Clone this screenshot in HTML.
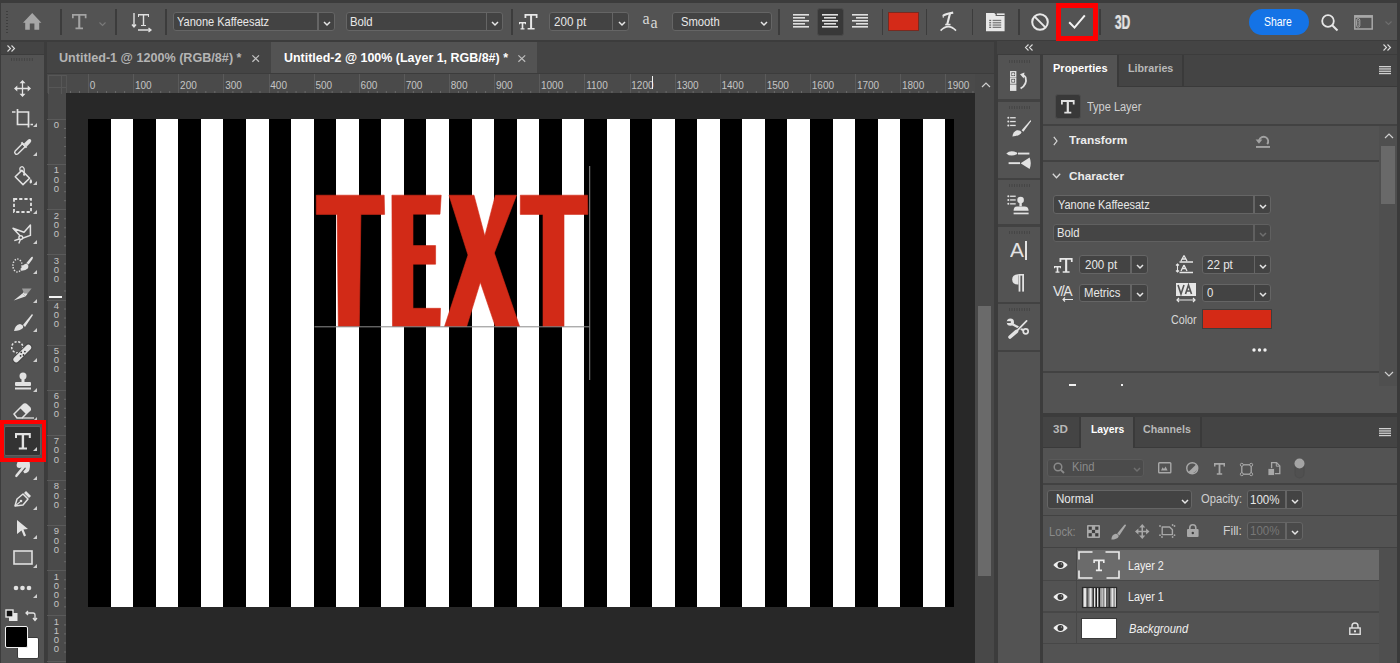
<!DOCTYPE html><html><head><meta charset="utf-8"><style>
html,body{margin:0;padding:0;}
body{width:1400px;height:663px;overflow:hidden;position:relative;background:#3c3c3c;font-family:"Liberation Sans",sans-serif;}
div{position:absolute;box-sizing:border-box;}
.t{white-space:nowrap;line-height:1;}
svg{overflow:visible}
</style></head><body>
<div style="left:1px;top:3px;width:1399px;height:37px;background:#535353;"></div>
<svg style="position:absolute;left:6px;top:11px;" width="3" height="23" viewBox="0 0 3 23"><rect x="0" y="0" width="2" height="1" fill="#3e3e3e"/><rect x="0" y="3" width="2" height="1" fill="#3e3e3e"/><rect x="0" y="6" width="2" height="1" fill="#3e3e3e"/><rect x="0" y="9" width="2" height="1" fill="#3e3e3e"/><rect x="0" y="12" width="2" height="1" fill="#3e3e3e"/><rect x="0" y="15" width="2" height="1" fill="#3e3e3e"/><rect x="0" y="18" width="2" height="1" fill="#3e3e3e"/><rect x="0" y="21" width="2" height="1" fill="#3e3e3e"/></svg>
<svg style="position:absolute;left:22.5px;top:13px;" width="19" height="17" viewBox="0 0 19 17"><path d="M9.2 0 L18.4 9.8 L16.2 9.8 L16.2 16.8 L11.4 16.8 L11.4 10.5 L6.8 10.5 L6.8 16.8 L2.2 16.8 L2.2 9.8 L0 9.8 Z" fill="#a6a6a6"/></svg>
<div style="left:60px;top:9px;width:1.6px;height:26px;background:#3c3c3c;"></div>
<div style="left:115px;top:9px;width:1.6px;height:26px;background:#3c3c3c;"></div>
<div style="left:165px;top:9px;width:1.6px;height:26px;background:#3c3c3c;"></div>
<div style="left:511px;top:9px;width:1.6px;height:26px;background:#3c3c3c;"></div>
<div style="left:778px;top:9px;width:1.6px;height:26px;background:#3c3c3c;"></div>
<div style="left:881.5px;top:9px;width:1.6px;height:26px;background:#3c3c3c;"></div>
<div style="left:925.5px;top:9px;width:1.6px;height:26px;background:#3c3c3c;"></div>
<div style="left:971.5px;top:9px;width:1.6px;height:26px;background:#3c3c3c;"></div>
<div style="left:1018px;top:9px;width:1.6px;height:26px;background:#3c3c3c;"></div>
<div style="left:1099px;top:9px;width:1.6px;height:26px;background:#3c3c3c;"></div>
<svg style="position:absolute;left:72px;top:14px;" width="15" height="15.5" viewBox="0 0 15 15.5"><path d="M0 0 H14.5 V4.2 H12.8 V1.8 H8.3 V13.6 H11 V15.3 H3.5 V13.6 H6.2 V1.8 H1.7 V4.2 H0 Z" fill="#a3a3a3"/></svg>
<svg style="position:absolute;left:99px;top:21.5px;" width="8" height="5" viewBox="0 0 8 5"><path d="M0.5 0.5 L3.5 3.5 L6.5 0.5" stroke="#7a7a7a" stroke-width="1.1" fill="none"/></svg>
<svg style="position:absolute;left:132px;top:13px;" width="20" height="19" viewBox="0 0 20 19"><path d="M2 0 V14 M0 11.5 L2 14 L4 11.5" stroke="#e0e0e0" stroke-width="1.4" fill="none"/><path d="M6 1 H17 V4 H16 V2.5 H12.2 V12 H14 V13 H9 V12 H10.8 V2.5 H7 V4 H6 Z" fill="#e0e0e0"/><path d="M6 17 H19 M16.5 15 L19 17 L16.5 19" stroke="#e0e0e0" stroke-width="1.3" fill="none"/></svg>
<div style="left:172.5px;top:12.3px;width:162px;height:18.5px;background:#434343;border:1px solid #656565;border-radius:3px;"></div>
<div class="t" style="left:177.3px;top:15.2px;font-size:13px;color:#e8e8e8;font-weight:400;letter-spacing:0px;transform:scaleX(0.8478);transform-origin:0 0;">Yanone Kaffeesatz</div>
<div style="left:317.0px;top:13.3px;width:1.6px;height:16.5px;background:#656565;"></div>
<svg style="position:absolute;left:322.8px;top:20.55px;" width="8" height="5" viewBox="0 0 8 5"><path d="M1 1 L4 4 L7 1" stroke="#e6e6e6" stroke-width="1.5" fill="none"/></svg>
<div style="left:346px;top:12.3px;width:157px;height:18.5px;background:#434343;border:1px solid #656565;border-radius:3px;"></div>
<div class="t" style="left:349.93px;top:15.2px;font-size:13px;color:#e8e8e8;font-weight:400;letter-spacing:0px;transform:scaleX(0.8714);transform-origin:0 0;">Bold</div>
<div style="left:485.5px;top:13.3px;width:1.6px;height:16.5px;background:#656565;"></div>
<svg style="position:absolute;left:491.3px;top:20.55px;" width="8" height="5" viewBox="0 0 8 5"><path d="M1 1 L4 4 L7 1" stroke="#e6e6e6" stroke-width="1.5" fill="none"/></svg>
<svg style="position:absolute;left:518.5px;top:14px;" width="19" height="16" viewBox="0 0 19 16"><path d="M5.5 0 H18.5 V4 H16.8 V1.8 H13.1 V14 H15.6 V15.6 H8.6 V14 H11.1 V1.8 H7.3 V4 H5.5 Z" fill="#e8e8e8"/><path d="M0 8 H7 V10.3 H6 V9.5 H4.3 V14.2 H5.5 V15.6 H1.5 V14.2 H2.7 V9.5 H1 V10.3 H0 Z" fill="#e8e8e8"/></svg>
<div style="left:549.3px;top:12.3px;width:80px;height:18.5px;background:#434343;border:1px solid #656565;border-radius:3px;"></div>
<div class="t" style="left:554.4px;top:15.2px;font-size:13px;color:#e8e8e8;font-weight:400;letter-spacing:0px;transform:scaleX(0.8924);transform-origin:0 0;">200 pt</div>
<div style="left:611.8px;top:13.3px;width:1.6px;height:16.5px;background:#656565;"></div>
<svg style="position:absolute;left:617.5999999999999px;top:20.55px;" width="8" height="5" viewBox="0 0 8 5"><path d="M1 1 L4 4 L7 1" stroke="#e6e6e6" stroke-width="1.5" fill="none"/></svg>
<div class="t" style="left:642.5px;top:10.54px;font-size:16px;color:#d8d8d8;font-weight:400;letter-spacing:0px;font-family:'Liberation Serif';">a</div>
<div class="t" style="left:650.6px;top:15.14px;font-size:16px;color:#d8d8d8;font-weight:400;letter-spacing:0px;font-family:'Liberation Serif';">a</div>
<div style="left:671.9px;top:12.3px;width:100px;height:18.5px;background:#434343;border:1px solid #656565;border-radius:3px;"></div>
<div class="t" style="left:681.3px;top:15.2px;font-size:13px;color:#e8e8e8;font-weight:400;letter-spacing:0px;transform:scaleX(0.8638);transform-origin:0 0;">Smooth</div>
<svg style="position:absolute;left:760.1999999999999px;top:20.55px;" width="8" height="5" viewBox="0 0 8 5"><path d="M1 1 L4 4 L7 1" stroke="#e6e6e6" stroke-width="1.5" fill="none"/></svg>
<svg style="position:absolute;left:793px;top:14px;" width="16" height="14" viewBox="0 0 16 14"><rect x="0" y="0" width="16" height="1.6" fill="#e0e0e0"/><rect x="0" y="3" width="12" height="1.6" fill="#e0e0e0"/><rect x="0" y="6" width="16" height="1.6" fill="#e0e0e0"/><rect x="0" y="9" width="12" height="1.6" fill="#e0e0e0"/><rect x="0" y="12" width="16" height="1.6" fill="#e0e0e0"/></svg>
<div style="left:817px;top:8px;width:27px;height:28px;background:#383838;border-radius:3px;border:1px solid #4a4a4a;"></div>
<svg style="position:absolute;left:822px;top:14px;" width="16" height="14" viewBox="0 0 16 14"><rect x="0.0" y="0" width="16" height="1.6" fill="#e0e0e0"/><rect x="2.0" y="3" width="12" height="1.6" fill="#e0e0e0"/><rect x="0.0" y="6" width="16" height="1.6" fill="#e0e0e0"/><rect x="2.0" y="9" width="12" height="1.6" fill="#e0e0e0"/><rect x="0.0" y="12" width="16" height="1.6" fill="#e0e0e0"/></svg>
<svg style="position:absolute;left:852px;top:14px;" width="16" height="14" viewBox="0 0 16 14"><rect x="0" y="0" width="16" height="1.6" fill="#e0e0e0"/><rect x="4" y="3" width="12" height="1.6" fill="#e0e0e0"/><rect x="0" y="6" width="16" height="1.6" fill="#e0e0e0"/><rect x="4" y="9" width="12" height="1.6" fill="#e0e0e0"/><rect x="0" y="12" width="16" height="1.6" fill="#e0e0e0"/></svg>
<div style="left:888px;top:12px;width:31px;height:19px;background:#d42a18;border:1px solid #7a2a20;"></div>
<svg style="position:absolute;left:940px;top:12px;" width="17" height="20" viewBox="0 0 17 20"><path d="M3.2 3.6 Q6 1.8 13.2 0.6" stroke="#e6e6e6" stroke-width="2.2" fill="none"/><path d="M10 1.5 L7.2 12.4" stroke="#e6e6e6" stroke-width="2.1"/><path d="M5.2 12.6 H10.5" stroke="#e6e6e6" stroke-width="1.6"/><path d="M3 3 L3.4 5.6" stroke="#e6e6e6" stroke-width="1.2"/><path d="M0.6 18.6 Q8.3 10.6 16 18.6" stroke="#e6e6e6" stroke-width="1.6" fill="none"/></svg>
<svg style="position:absolute;left:985.7px;top:12.6px;" width="19" height="19" viewBox="0 0 19 19"><path d="M0 0 H8.3 L10.3 2.3 H18.6 V18.3 H0 Z" fill="#e8e8e8"/><path d="M10.3 2.3 L8.6 0.4 H18.6 V1.6" fill="none" stroke="none"/><rect x="10.8" y="0.4" width="7.8" height="1.6" fill="#e8e8e8"/><rect x="9.6" y="2.0" width="9" height="0.9" fill="#535353"/><rect x="3.2" y="6.8" width="2" height="1.3" fill="#6a6a6a"/><rect x="6.6" y="6.8" width="8.6" height="1.3" fill="#7a7a7a"/><rect x="3.2" y="9.1" width="2" height="1.3" fill="#6a6a6a"/><rect x="6.6" y="9.1" width="8.6" height="1.3" fill="#7a7a7a"/><rect x="3.2" y="11.4" width="2" height="1.3" fill="#6a6a6a"/><rect x="6.6" y="11.4" width="8.6" height="1.3" fill="#7a7a7a"/><rect x="3.2" y="13.7" width="2" height="1.3" fill="#6a6a6a"/><rect x="6.6" y="13.7" width="8.6" height="1.3" fill="#7a7a7a"/></svg>
<svg style="position:absolute;left:1031px;top:13px;" width="18" height="18" viewBox="0 0 18 18"><circle cx="9" cy="9" r="7.8" stroke="#e8e8e8" stroke-width="2" fill="none"/><path d="M3.6 3.6 L14.4 14.4" stroke="#e8e8e8" stroke-width="2"/></svg>
<div style="left:1056.4px;top:3.4px;width:41.8px;height:37.4px;background:transparent;border:5.7px solid #ff0000;"></div>
<svg style="position:absolute;left:1068px;top:14px;" width="18" height="15" viewBox="0 0 18 15"><path d="M1.2 8.2 L6.5 13.6 L16.8 1.3" stroke="#f4f4f4" stroke-width="2" fill="none"/></svg>
<div class="t" style="left:1115.2px;top:12.59px;font-size:19.5px;color:#e2e2e2;font-weight:700;letter-spacing:0px;transform:scaleX(0.6118);transform-origin:0 0;text-shadow:-1.3px 0.3px #8c8c8c;">3D</div>
<div style="left:1249px;top:9px;width:60px;height:26px;background:#1473e6;border-radius:13px;"></div>
<div class="t" style="left:1264.0px;top:15.94px;font-size:12px;color:#ffffff;font-weight:400;letter-spacing:0px;transform:scaleX(0.8687);transform-origin:0 0;">Share</div>
<svg style="position:absolute;left:1321px;top:14px;" width="18" height="17" viewBox="0 0 18 17"><circle cx="7" cy="7" r="5.8" stroke="#e6e6e6" stroke-width="1.8" fill="none"/><path d="M11.2 11.2 L16.5 16.5" stroke="#e6e6e6" stroke-width="2"/></svg>
<svg style="position:absolute;left:1354px;top:15px;" width="19" height="15" viewBox="0 0 19 15"><rect x="0.8" y="0.8" width="17.4" height="13.2" stroke="#a8a8a8" stroke-width="1.5" fill="none"/><rect x="0.8" y="0.8" width="17.4" height="2" fill="#a8a8a8"/><rect x="2.6" y="3.6" width="3.2" height="8.6" rx="1.6" stroke="#a8a8a8" stroke-width="1" fill="none"/><rect x="3.6" y="5.2" width="1.2" height="1.1" fill="#a8a8a8"/><rect x="3.6" y="7.4" width="1.2" height="1.1" fill="#a8a8a8"/><rect x="3.6" y="9.6" width="1.2" height="1.1" fill="#a8a8a8"/></svg>
<svg style="position:absolute;left:1385px;top:20.5px;" width="8" height="5" viewBox="0 0 8 5"><path d="M0.5 0.5 L3.5 3.5 L6.5 0.5" stroke="#6e6e6e" stroke-width="1.1" fill="none"/></svg>
<div style="left:1397px;top:0px;width:3px;height:663px;background:#3a3a3a;"></div>
<div style="left:1px;top:42px;width:43px;height:12px;background:#444444;"></div>
<svg style="position:absolute;left:7px;top:45px;" width="9" height="7" viewBox="0 0 9 7"><path d="M0.5 0.5 L3.5 3.5 L0.5 6.5 M4.5 0.5 L7.5 3.5 L4.5 6.5" stroke="#dcdcdc" stroke-width="1.1" fill="none"/></svg>
<div style="left:1px;top:55px;width:43px;height:608px;background:#535353;"></div>
<svg style="position:absolute;left:11px;top:58px;" width="22" height="2" viewBox="0 0 22 2"><rect x="0.0" y="0" width="1" height="3" fill="#444"/><rect x="2.6" y="0" width="1" height="3" fill="#444"/><rect x="5.2" y="0" width="1" height="3" fill="#444"/><rect x="7.800000000000001" y="0" width="1" height="3" fill="#444"/><rect x="10.4" y="0" width="1" height="3" fill="#444"/><rect x="13.0" y="0" width="1" height="3" fill="#444"/><rect x="15.600000000000001" y="0" width="1" height="3" fill="#444"/><rect x="18.2" y="0" width="1" height="3" fill="#444"/><rect x="20.8" y="0" width="1" height="3" fill="#444"/></svg>
<div style="left:47px;top:42px;width:928px;height:31px;background:#444444;"></div>
<div style="left:975px;top:42px;width:19px;height:31px;background:#444444;"></div>
<div class="t" style="left:59.0px;top:50.7px;font-size:13px;color:#b4b4b4;font-weight:700;letter-spacing:0px;transform:scaleX(0.9695);transform-origin:0 0;">Untitled-1 @ 1200% (RGB/8#) *</div>
<svg style="position:absolute;left:251.8px;top:54.6px;" width="7.4" height="7.2" viewBox="0 0 7.4 7.2"><path d="M0.4 0.4 L7 6.8 M7 0.4 L0.4 6.8" stroke="#c4c4c4" stroke-width="1.2"/></svg>
<div style="left:271px;top:42px;width:266px;height:31px;background:#535353;"></div>
<div class="t" style="left:283.6px;top:50.6px;font-size:13px;color:#ffffff;font-weight:700;letter-spacing:0px;transform:scaleX(0.9583);transform-origin:0 0;">Untitled-2 @ 100% (Layer 1, RGB/8#) *</div>
<svg style="position:absolute;left:517.8px;top:54.5px;" width="7.6" height="7.2" viewBox="0 0 7.6 7.2"><path d="M0.4 0.4 L7.2 6.8 M7.2 0.4 L0.4 6.8" stroke="#bdbdbd" stroke-width="1.2"/></svg>
<div style="left:47px;top:74px;width:928px;height:19px;background:#4a4a4a;"></div>
<div style="left:47px;top:93px;width:19px;height:570px;background:#4a4a4a;"></div>
<div style="left:47px;top:74px;width:1px;height:589px;background:#3d3d3d;"></div>
<div style="left:47px;top:74px;width:19px;height:19px;background:#4a4a4a;"></div>
<div style="left:48px;top:75px;width:18.5px;height:1px;background:#575757;"></div>
<div style="left:48px;top:87.3px;width:19px;height:1px;background:#575757;"></div>
<div style="left:48.2px;top:75px;width:1px;height:19px;background:#575757;"></div>
<div style="left:60.5px;top:75px;width:1px;height:19px;background:#575757;"></div>
<div style="left:66px;top:75px;width:1px;height:18px;background:#555555;"></div>
<div style="left:88.00px;top:74px;width:1px;height:19px;background:#5a5a5a"></div>
<div class="t" style="left:89.8px;top:80.5px;font-size:10px;color:#c4c4c4;font-weight:400;letter-spacing:0px;">0</div>
<div style="left:133.12px;top:74px;width:1px;height:19px;background:#5a5a5a"></div>
<div class="t" style="left:134.9px;top:80.5px;font-size:10px;color:#c4c4c4;font-weight:400;letter-spacing:0px;">100</div>
<div style="left:178.25px;top:74px;width:1px;height:19px;background:#5a5a5a"></div>
<div class="t" style="left:180.1px;top:80.5px;font-size:10px;color:#c4c4c4;font-weight:400;letter-spacing:0px;">200</div>
<div style="left:223.38px;top:74px;width:1px;height:19px;background:#5a5a5a"></div>
<div class="t" style="left:225.2px;top:80.5px;font-size:10px;color:#c4c4c4;font-weight:400;letter-spacing:0px;">300</div>
<div style="left:268.50px;top:74px;width:1px;height:19px;background:#5a5a5a"></div>
<div class="t" style="left:270.3px;top:80.5px;font-size:10px;color:#c4c4c4;font-weight:400;letter-spacing:0px;">400</div>
<div style="left:313.62px;top:74px;width:1px;height:19px;background:#5a5a5a"></div>
<div class="t" style="left:315.4px;top:80.5px;font-size:10px;color:#c4c4c4;font-weight:400;letter-spacing:0px;">500</div>
<div style="left:358.75px;top:74px;width:1px;height:19px;background:#5a5a5a"></div>
<div class="t" style="left:360.6px;top:80.5px;font-size:10px;color:#c4c4c4;font-weight:400;letter-spacing:0px;">600</div>
<div style="left:403.88px;top:74px;width:1px;height:19px;background:#5a5a5a"></div>
<div class="t" style="left:405.7px;top:80.5px;font-size:10px;color:#c4c4c4;font-weight:400;letter-spacing:0px;">700</div>
<div style="left:449.00px;top:74px;width:1px;height:19px;background:#5a5a5a"></div>
<div class="t" style="left:450.8px;top:80.5px;font-size:10px;color:#c4c4c4;font-weight:400;letter-spacing:0px;">800</div>
<div style="left:494.12px;top:74px;width:1px;height:19px;background:#5a5a5a"></div>
<div class="t" style="left:495.9px;top:80.5px;font-size:10px;color:#c4c4c4;font-weight:400;letter-spacing:0px;">900</div>
<div style="left:539.25px;top:74px;width:1px;height:19px;background:#5a5a5a"></div>
<div class="t" style="left:541.0px;top:80.5px;font-size:10px;color:#c4c4c4;font-weight:400;letter-spacing:0px;">1000</div>
<div style="left:584.38px;top:74px;width:1px;height:19px;background:#5a5a5a"></div>
<div class="t" style="left:586.2px;top:80.5px;font-size:10px;color:#c4c4c4;font-weight:400;letter-spacing:0px;">1100</div>
<div style="left:629.50px;top:74px;width:1px;height:19px;background:#5a5a5a"></div>
<div class="t" style="left:631.3px;top:80.5px;font-size:10px;color:#c4c4c4;font-weight:400;letter-spacing:0px;">1200</div>
<div style="left:674.62px;top:74px;width:1px;height:19px;background:#5a5a5a"></div>
<div class="t" style="left:676.4px;top:80.5px;font-size:10px;color:#c4c4c4;font-weight:400;letter-spacing:0px;">1300</div>
<div style="left:719.75px;top:74px;width:1px;height:19px;background:#5a5a5a"></div>
<div class="t" style="left:721.5px;top:80.5px;font-size:10px;color:#c4c4c4;font-weight:400;letter-spacing:0px;">1400</div>
<div style="left:764.88px;top:74px;width:1px;height:19px;background:#5a5a5a"></div>
<div class="t" style="left:766.7px;top:80.5px;font-size:10px;color:#c4c4c4;font-weight:400;letter-spacing:0px;">1500</div>
<div style="left:810.00px;top:74px;width:1px;height:19px;background:#5a5a5a"></div>
<div class="t" style="left:811.8px;top:80.5px;font-size:10px;color:#c4c4c4;font-weight:400;letter-spacing:0px;">1600</div>
<div style="left:855.12px;top:74px;width:1px;height:19px;background:#5a5a5a"></div>
<div class="t" style="left:856.9px;top:80.5px;font-size:10px;color:#c4c4c4;font-weight:400;letter-spacing:0px;">1700</div>
<div style="left:900.25px;top:74px;width:1px;height:19px;background:#5a5a5a"></div>
<div class="t" style="left:902.0px;top:80.5px;font-size:10px;color:#c4c4c4;font-weight:400;letter-spacing:0px;">1800</div>
<div style="left:945.38px;top:74px;width:1px;height:19px;background:#5a5a5a"></div>
<div class="t" style="left:947.2px;top:80.5px;font-size:10px;color:#c4c4c4;font-weight:400;letter-spacing:0px;">1900</div>
<svg style="position:absolute;left:66px;top:74px" width="909" height="19"><rect x="12.97" y="17" width="1" height="2" fill="#6a6a6a"/><rect x="3.95" y="17" width="1" height="2" fill="#6a6a6a"/><rect x="31.03" y="17" width="1" height="2" fill="#6a6a6a"/><rect x="40.05" y="17" width="1" height="2" fill="#6a6a6a"/><rect x="49.08" y="17" width="1" height="2" fill="#6a6a6a"/><rect x="58.10" y="17" width="1" height="2" fill="#6a6a6a"/><rect x="76.15" y="17" width="1" height="2" fill="#6a6a6a"/><rect x="85.18" y="17" width="1" height="2" fill="#6a6a6a"/><rect x="94.20" y="17" width="1" height="2" fill="#6a6a6a"/><rect x="103.22" y="17" width="1" height="2" fill="#6a6a6a"/><rect x="121.28" y="17" width="1" height="2" fill="#6a6a6a"/><rect x="130.30" y="17" width="1" height="2" fill="#6a6a6a"/><rect x="139.32" y="17" width="1" height="2" fill="#6a6a6a"/><rect x="148.35" y="17" width="1" height="2" fill="#6a6a6a"/><rect x="166.40" y="17" width="1" height="2" fill="#6a6a6a"/><rect x="175.43" y="17" width="1" height="2" fill="#6a6a6a"/><rect x="184.45" y="17" width="1" height="2" fill="#6a6a6a"/><rect x="193.48" y="17" width="1" height="2" fill="#6a6a6a"/><rect x="211.52" y="17" width="1" height="2" fill="#6a6a6a"/><rect x="220.55" y="17" width="1" height="2" fill="#6a6a6a"/><rect x="229.57" y="17" width="1" height="2" fill="#6a6a6a"/><rect x="238.60" y="17" width="1" height="2" fill="#6a6a6a"/><rect x="256.65" y="17" width="1" height="2" fill="#6a6a6a"/><rect x="265.68" y="17" width="1" height="2" fill="#6a6a6a"/><rect x="274.70" y="17" width="1" height="2" fill="#6a6a6a"/><rect x="283.73" y="17" width="1" height="2" fill="#6a6a6a"/><rect x="301.77" y="17" width="1" height="2" fill="#6a6a6a"/><rect x="310.80" y="17" width="1" height="2" fill="#6a6a6a"/><rect x="319.82" y="17" width="1" height="2" fill="#6a6a6a"/><rect x="328.85" y="17" width="1" height="2" fill="#6a6a6a"/><rect x="346.90" y="17" width="1" height="2" fill="#6a6a6a"/><rect x="355.93" y="17" width="1" height="2" fill="#6a6a6a"/><rect x="364.95" y="17" width="1" height="2" fill="#6a6a6a"/><rect x="373.98" y="17" width="1" height="2" fill="#6a6a6a"/><rect x="392.02" y="17" width="1" height="2" fill="#6a6a6a"/><rect x="401.05" y="17" width="1" height="2" fill="#6a6a6a"/><rect x="410.07" y="17" width="1" height="2" fill="#6a6a6a"/><rect x="419.10" y="17" width="1" height="2" fill="#6a6a6a"/><rect x="437.15" y="17" width="1" height="2" fill="#6a6a6a"/><rect x="446.17" y="17" width="1" height="2" fill="#6a6a6a"/><rect x="455.20" y="17" width="1" height="2" fill="#6a6a6a"/><rect x="464.23" y="17" width="1" height="2" fill="#6a6a6a"/><rect x="482.27" y="17" width="1" height="2" fill="#6a6a6a"/><rect x="491.30" y="17" width="1" height="2" fill="#6a6a6a"/><rect x="500.33" y="17" width="1" height="2" fill="#6a6a6a"/><rect x="509.35" y="17" width="1" height="2" fill="#6a6a6a"/><rect x="527.40" y="17" width="1" height="2" fill="#6a6a6a"/><rect x="536.42" y="17" width="1" height="2" fill="#6a6a6a"/><rect x="545.45" y="17" width="1" height="2" fill="#6a6a6a"/><rect x="554.48" y="17" width="1" height="2" fill="#6a6a6a"/><rect x="572.52" y="17" width="1" height="2" fill="#6a6a6a"/><rect x="581.55" y="17" width="1" height="2" fill="#6a6a6a"/><rect x="590.58" y="17" width="1" height="2" fill="#6a6a6a"/><rect x="599.60" y="17" width="1" height="2" fill="#6a6a6a"/><rect x="617.65" y="17" width="1" height="2" fill="#6a6a6a"/><rect x="626.67" y="17" width="1" height="2" fill="#6a6a6a"/><rect x="635.70" y="17" width="1" height="2" fill="#6a6a6a"/><rect x="644.73" y="17" width="1" height="2" fill="#6a6a6a"/><rect x="662.77" y="17" width="1" height="2" fill="#6a6a6a"/><rect x="671.80" y="17" width="1" height="2" fill="#6a6a6a"/><rect x="680.83" y="17" width="1" height="2" fill="#6a6a6a"/><rect x="689.85" y="17" width="1" height="2" fill="#6a6a6a"/><rect x="707.90" y="17" width="1" height="2" fill="#6a6a6a"/><rect x="716.92" y="17" width="1" height="2" fill="#6a6a6a"/><rect x="725.95" y="17" width="1" height="2" fill="#6a6a6a"/><rect x="734.98" y="17" width="1" height="2" fill="#6a6a6a"/><rect x="753.02" y="17" width="1" height="2" fill="#6a6a6a"/><rect x="762.05" y="17" width="1" height="2" fill="#6a6a6a"/><rect x="771.08" y="17" width="1" height="2" fill="#6a6a6a"/><rect x="780.10" y="17" width="1" height="2" fill="#6a6a6a"/><rect x="798.15" y="17" width="1" height="2" fill="#6a6a6a"/><rect x="807.17" y="17" width="1" height="2" fill="#6a6a6a"/><rect x="816.20" y="17" width="1" height="2" fill="#6a6a6a"/><rect x="825.23" y="17" width="1" height="2" fill="#6a6a6a"/><rect x="843.27" y="17" width="1" height="2" fill="#6a6a6a"/><rect x="852.30" y="17" width="1" height="2" fill="#6a6a6a"/><rect x="861.33" y="17" width="1" height="2" fill="#6a6a6a"/><rect x="870.35" y="17" width="1" height="2" fill="#6a6a6a"/><rect x="888.40" y="17" width="1" height="2" fill="#6a6a6a"/><rect x="897.42" y="17" width="1" height="2" fill="#6a6a6a"/><rect x="906.45" y="17" width="1" height="2" fill="#6a6a6a"/><rect x="915.48" y="17" width="1" height="2" fill="#6a6a6a"/></svg>
<div style="left:47px;top:119.00px;width:19px;height:1px;background:#5a5a5a"></div>
<div class="t" style="left:52.5px;top:120.3px;font-size:9.5px;color:#c4c4c4;font-weight:400;letter-spacing:0px;width:8px;text-align:center;">0</div>
<div style="left:47px;top:164.12px;width:19px;height:1px;background:#5a5a5a"></div>
<div class="t" style="left:52.5px;top:165.4px;font-size:9.5px;color:#c4c4c4;font-weight:400;letter-spacing:0px;width:8px;text-align:center;">1</div>
<div class="t" style="left:52.5px;top:174.6px;font-size:9.5px;color:#c4c4c4;font-weight:400;letter-spacing:0px;width:8px;text-align:center;">0</div>
<div class="t" style="left:52.5px;top:183.8px;font-size:9.5px;color:#c4c4c4;font-weight:400;letter-spacing:0px;width:8px;text-align:center;">0</div>
<div style="left:47px;top:209.25px;width:19px;height:1px;background:#5a5a5a"></div>
<div class="t" style="left:52.5px;top:210.6px;font-size:9.5px;color:#c4c4c4;font-weight:400;letter-spacing:0px;width:8px;text-align:center;">2</div>
<div class="t" style="left:52.5px;top:219.8px;font-size:9.5px;color:#c4c4c4;font-weight:400;letter-spacing:0px;width:8px;text-align:center;">0</div>
<div class="t" style="left:52.5px;top:229.0px;font-size:9.5px;color:#c4c4c4;font-weight:400;letter-spacing:0px;width:8px;text-align:center;">0</div>
<div style="left:47px;top:254.38px;width:19px;height:1px;background:#5a5a5a"></div>
<div class="t" style="left:52.5px;top:255.7px;font-size:9.5px;color:#c4c4c4;font-weight:400;letter-spacing:0px;width:8px;text-align:center;">3</div>
<div class="t" style="left:52.5px;top:264.9px;font-size:9.5px;color:#c4c4c4;font-weight:400;letter-spacing:0px;width:8px;text-align:center;">0</div>
<div class="t" style="left:52.5px;top:274.1px;font-size:9.5px;color:#c4c4c4;font-weight:400;letter-spacing:0px;width:8px;text-align:center;">0</div>
<div style="left:47px;top:299.50px;width:19px;height:1px;background:#5a5a5a"></div>
<div class="t" style="left:52.5px;top:300.8px;font-size:9.5px;color:#c4c4c4;font-weight:400;letter-spacing:0px;width:8px;text-align:center;">4</div>
<div class="t" style="left:52.5px;top:310.0px;font-size:9.5px;color:#c4c4c4;font-weight:400;letter-spacing:0px;width:8px;text-align:center;">0</div>
<div class="t" style="left:52.5px;top:319.2px;font-size:9.5px;color:#c4c4c4;font-weight:400;letter-spacing:0px;width:8px;text-align:center;">0</div>
<div style="left:47px;top:344.62px;width:19px;height:1px;background:#5a5a5a"></div>
<div class="t" style="left:52.5px;top:345.9px;font-size:9.5px;color:#c4c4c4;font-weight:400;letter-spacing:0px;width:8px;text-align:center;">5</div>
<div class="t" style="left:52.5px;top:355.1px;font-size:9.5px;color:#c4c4c4;font-weight:400;letter-spacing:0px;width:8px;text-align:center;">0</div>
<div class="t" style="left:52.5px;top:364.3px;font-size:9.5px;color:#c4c4c4;font-weight:400;letter-spacing:0px;width:8px;text-align:center;">0</div>
<div style="left:47px;top:389.75px;width:19px;height:1px;background:#5a5a5a"></div>
<div class="t" style="left:52.5px;top:391.1px;font-size:9.5px;color:#c4c4c4;font-weight:400;letter-spacing:0px;width:8px;text-align:center;">6</div>
<div class="t" style="left:52.5px;top:400.2px;font-size:9.5px;color:#c4c4c4;font-weight:400;letter-spacing:0px;width:8px;text-align:center;">0</div>
<div class="t" style="left:52.5px;top:409.4px;font-size:9.5px;color:#c4c4c4;font-weight:400;letter-spacing:0px;width:8px;text-align:center;">0</div>
<div style="left:47px;top:434.88px;width:19px;height:1px;background:#5a5a5a"></div>
<div class="t" style="left:52.5px;top:436.2px;font-size:9.5px;color:#c4c4c4;font-weight:400;letter-spacing:0px;width:8px;text-align:center;">7</div>
<div class="t" style="left:52.5px;top:445.4px;font-size:9.5px;color:#c4c4c4;font-weight:400;letter-spacing:0px;width:8px;text-align:center;">0</div>
<div class="t" style="left:52.5px;top:454.6px;font-size:9.5px;color:#c4c4c4;font-weight:400;letter-spacing:0px;width:8px;text-align:center;">0</div>
<div style="left:47px;top:480.00px;width:19px;height:1px;background:#5a5a5a"></div>
<div class="t" style="left:52.5px;top:481.3px;font-size:9.5px;color:#c4c4c4;font-weight:400;letter-spacing:0px;width:8px;text-align:center;">8</div>
<div class="t" style="left:52.5px;top:490.5px;font-size:9.5px;color:#c4c4c4;font-weight:400;letter-spacing:0px;width:8px;text-align:center;">0</div>
<div class="t" style="left:52.5px;top:499.7px;font-size:9.5px;color:#c4c4c4;font-weight:400;letter-spacing:0px;width:8px;text-align:center;">0</div>
<div style="left:47px;top:525.12px;width:19px;height:1px;background:#5a5a5a"></div>
<div class="t" style="left:52.5px;top:526.4px;font-size:9.5px;color:#c4c4c4;font-weight:400;letter-spacing:0px;width:8px;text-align:center;">9</div>
<div class="t" style="left:52.5px;top:535.6px;font-size:9.5px;color:#c4c4c4;font-weight:400;letter-spacing:0px;width:8px;text-align:center;">0</div>
<div class="t" style="left:52.5px;top:544.8px;font-size:9.5px;color:#c4c4c4;font-weight:400;letter-spacing:0px;width:8px;text-align:center;">0</div>
<div style="left:47px;top:570.25px;width:19px;height:1px;background:#5a5a5a"></div>
<div class="t" style="left:52.5px;top:571.5px;font-size:9.5px;color:#c4c4c4;font-weight:400;letter-spacing:0px;width:8px;text-align:center;">1</div>
<div class="t" style="left:52.5px;top:580.8px;font-size:9.5px;color:#c4c4c4;font-weight:400;letter-spacing:0px;width:8px;text-align:center;">0</div>
<div class="t" style="left:52.5px;top:589.9px;font-size:9.5px;color:#c4c4c4;font-weight:400;letter-spacing:0px;width:8px;text-align:center;">0</div>
<div class="t" style="left:52.5px;top:599.1px;font-size:9.5px;color:#c4c4c4;font-weight:400;letter-spacing:0px;width:8px;text-align:center;">0</div>
<div style="left:47px;top:615.38px;width:19px;height:1px;background:#5a5a5a"></div>
<div class="t" style="left:52.5px;top:616.7px;font-size:9.5px;color:#c4c4c4;font-weight:400;letter-spacing:0px;width:8px;text-align:center;">1</div>
<div class="t" style="left:52.5px;top:625.9px;font-size:9.5px;color:#c4c4c4;font-weight:400;letter-spacing:0px;width:8px;text-align:center;">1</div>
<div class="t" style="left:52.5px;top:635.1px;font-size:9.5px;color:#c4c4c4;font-weight:400;letter-spacing:0px;width:8px;text-align:center;">0</div>
<div class="t" style="left:52.5px;top:644.3px;font-size:9.5px;color:#c4c4c4;font-weight:400;letter-spacing:0px;width:8px;text-align:center;">0</div>
<div style="left:47px;top:660.50px;width:19px;height:1px;background:#5a5a5a"></div>
<div class="t" style="left:52.5px;top:661.8px;font-size:9.5px;color:#c4c4c4;font-weight:400;letter-spacing:0px;width:8px;text-align:center;">1</div>
<div class="t" style="left:52.5px;top:671.0px;font-size:9.5px;color:#c4c4c4;font-weight:400;letter-spacing:0px;width:8px;text-align:center;">2</div>
<div class="t" style="left:52.5px;top:680.2px;font-size:9.5px;color:#c4c4c4;font-weight:400;letter-spacing:0px;width:8px;text-align:center;">0</div>
<div class="t" style="left:52.5px;top:689.4px;font-size:9.5px;color:#c4c4c4;font-weight:400;letter-spacing:0px;width:8px;text-align:center;">0</div>
<svg style="position:absolute;left:47px;top:93px" width="19" height="570"><rect x="17" y="35.03" width="2" height="1" fill="#6a6a6a"/><rect x="17" y="44.05" width="2" height="1" fill="#6a6a6a"/><rect x="17" y="53.07" width="2" height="1" fill="#6a6a6a"/><rect x="17" y="62.10" width="2" height="1" fill="#6a6a6a"/><rect x="17" y="80.15" width="2" height="1" fill="#6a6a6a"/><rect x="17" y="89.18" width="2" height="1" fill="#6a6a6a"/><rect x="17" y="98.20" width="2" height="1" fill="#6a6a6a"/><rect x="17" y="107.22" width="2" height="1" fill="#6a6a6a"/><rect x="17" y="125.28" width="2" height="1" fill="#6a6a6a"/><rect x="17" y="134.30" width="2" height="1" fill="#6a6a6a"/><rect x="17" y="143.32" width="2" height="1" fill="#6a6a6a"/><rect x="17" y="152.35" width="2" height="1" fill="#6a6a6a"/><rect x="17" y="170.40" width="2" height="1" fill="#6a6a6a"/><rect x="17" y="179.43" width="2" height="1" fill="#6a6a6a"/><rect x="17" y="188.45" width="2" height="1" fill="#6a6a6a"/><rect x="17" y="197.48" width="2" height="1" fill="#6a6a6a"/><rect x="17" y="215.52" width="2" height="1" fill="#6a6a6a"/><rect x="17" y="224.55" width="2" height="1" fill="#6a6a6a"/><rect x="17" y="233.57" width="2" height="1" fill="#6a6a6a"/><rect x="17" y="242.60" width="2" height="1" fill="#6a6a6a"/><rect x="17" y="260.65" width="2" height="1" fill="#6a6a6a"/><rect x="17" y="269.68" width="2" height="1" fill="#6a6a6a"/><rect x="17" y="278.70" width="2" height="1" fill="#6a6a6a"/><rect x="17" y="287.73" width="2" height="1" fill="#6a6a6a"/><rect x="17" y="305.77" width="2" height="1" fill="#6a6a6a"/><rect x="17" y="314.80" width="2" height="1" fill="#6a6a6a"/><rect x="17" y="323.82" width="2" height="1" fill="#6a6a6a"/><rect x="17" y="332.85" width="2" height="1" fill="#6a6a6a"/><rect x="17" y="350.90" width="2" height="1" fill="#6a6a6a"/><rect x="17" y="359.93" width="2" height="1" fill="#6a6a6a"/><rect x="17" y="368.95" width="2" height="1" fill="#6a6a6a"/><rect x="17" y="377.98" width="2" height="1" fill="#6a6a6a"/><rect x="17" y="396.02" width="2" height="1" fill="#6a6a6a"/><rect x="17" y="405.05" width="2" height="1" fill="#6a6a6a"/><rect x="17" y="414.07" width="2" height="1" fill="#6a6a6a"/><rect x="17" y="423.10" width="2" height="1" fill="#6a6a6a"/><rect x="17" y="441.15" width="2" height="1" fill="#6a6a6a"/><rect x="17" y="450.17" width="2" height="1" fill="#6a6a6a"/><rect x="17" y="459.20" width="2" height="1" fill="#6a6a6a"/><rect x="17" y="468.23" width="2" height="1" fill="#6a6a6a"/><rect x="17" y="486.27" width="2" height="1" fill="#6a6a6a"/><rect x="17" y="495.30" width="2" height="1" fill="#6a6a6a"/><rect x="17" y="504.33" width="2" height="1" fill="#6a6a6a"/><rect x="17" y="513.35" width="2" height="1" fill="#6a6a6a"/><rect x="17" y="531.40" width="2" height="1" fill="#6a6a6a"/><rect x="17" y="540.42" width="2" height="1" fill="#6a6a6a"/><rect x="17" y="549.45" width="2" height="1" fill="#6a6a6a"/><rect x="17" y="558.48" width="2" height="1" fill="#6a6a6a"/><rect x="17" y="576.52" width="2" height="1" fill="#6a6a6a"/><rect x="17" y="585.55" width="2" height="1" fill="#6a6a6a"/><rect x="17" y="594.58" width="2" height="1" fill="#6a6a6a"/><rect x="17" y="603.60" width="2" height="1" fill="#6a6a6a"/></svg>
<div style="left:652px;top:76px;width:1.3px;height:12.5px;background:#f2f2f2;"></div>
<div style="left:49px;top:296px;width:12.5px;height:1.5px;background:#f2f2f2;"></div>
<div style="left:66px;top:93px;width:909px;height:570px;background:#282828;"></div>
<svg style="position:absolute;left:88px;top:119px" width="866.4" height="487.8" shape-rendering="crispEdges"><rect x="0.000" y="0" width="22.582" height="487.8" fill="#000"/><rect x="22.562" y="0" width="22.582" height="487.8" fill="#fff"/><rect x="45.125" y="0" width="22.582" height="487.8" fill="#000"/><rect x="67.688" y="0" width="22.582" height="487.8" fill="#fff"/><rect x="90.250" y="0" width="22.582" height="487.8" fill="#000"/><rect x="112.812" y="0" width="22.582" height="487.8" fill="#fff"/><rect x="135.375" y="0" width="22.582" height="487.8" fill="#000"/><rect x="157.938" y="0" width="22.582" height="487.8" fill="#fff"/><rect x="180.500" y="0" width="22.582" height="487.8" fill="#000"/><rect x="203.062" y="0" width="22.582" height="487.8" fill="#fff"/><rect x="225.625" y="0" width="22.582" height="487.8" fill="#000"/><rect x="248.188" y="0" width="22.582" height="487.8" fill="#fff"/><rect x="270.750" y="0" width="22.582" height="487.8" fill="#000"/><rect x="293.312" y="0" width="22.582" height="487.8" fill="#fff"/><rect x="315.875" y="0" width="22.582" height="487.8" fill="#000"/><rect x="338.438" y="0" width="22.582" height="487.8" fill="#fff"/><rect x="361.000" y="0" width="22.582" height="487.8" fill="#000"/><rect x="383.562" y="0" width="22.582" height="487.8" fill="#fff"/><rect x="406.125" y="0" width="22.582" height="487.8" fill="#000"/><rect x="428.688" y="0" width="22.582" height="487.8" fill="#fff"/><rect x="451.250" y="0" width="22.582" height="487.8" fill="#000"/><rect x="473.812" y="0" width="22.582" height="487.8" fill="#fff"/><rect x="496.375" y="0" width="22.582" height="487.8" fill="#000"/><rect x="518.938" y="0" width="22.582" height="487.8" fill="#fff"/><rect x="541.500" y="0" width="22.582" height="487.8" fill="#000"/><rect x="564.062" y="0" width="22.582" height="487.8" fill="#fff"/><rect x="586.625" y="0" width="22.582" height="487.8" fill="#000"/><rect x="609.188" y="0" width="22.582" height="487.8" fill="#fff"/><rect x="631.750" y="0" width="22.582" height="487.8" fill="#000"/><rect x="654.312" y="0" width="22.582" height="487.8" fill="#fff"/><rect x="676.875" y="0" width="22.582" height="487.8" fill="#000"/><rect x="699.438" y="0" width="22.582" height="487.8" fill="#fff"/><rect x="722.000" y="0" width="22.582" height="487.8" fill="#000"/><rect x="744.562" y="0" width="22.582" height="487.8" fill="#fff"/><rect x="767.125" y="0" width="22.582" height="487.8" fill="#000"/><rect x="789.688" y="0" width="22.582" height="487.8" fill="#fff"/><rect x="812.250" y="0" width="22.582" height="487.8" fill="#000"/><rect x="834.812" y="0" width="22.582" height="487.8" fill="#fff"/><rect x="857.375" y="0" width="9.045" height="487.8" fill="#000"/></svg>
<div style="left:975px;top:74px;width:19px;height:589px;background:#484848;"></div>
<svg style="position:absolute;left:981px;top:82px;" width="10" height="6" viewBox="0 0 10 6"><path d="M1 5 L5 1 L9 5" stroke="#cfcfcf" stroke-width="1.2" fill="none"/></svg>
<div style="left:978px;top:306px;width:13px;height:270px;background:#6a6a6a;"></div>
<div style="left:997px;top:41px;width:400px;height:13px;background:#444444;"></div>
<svg style="position:absolute;left:1025px;top:44px;" width="9" height="7" viewBox="0 0 9 7"><path d="M3.5 0.5 L0.5 3.5 L3.5 6.5 M7.5 0.5 L4.5 3.5 L7.5 6.5" stroke="#dcdcdc" stroke-width="1.1" fill="none"/></svg>
<svg style="position:absolute;left:1383px;top:44px;" width="9" height="7" viewBox="0 0 9 7"><path d="M0.5 0.5 L3.5 3.5 L0.5 6.5 M4.5 0.5 L7.5 3.5 L4.5 6.5" stroke="#dcdcdc" stroke-width="1.1" fill="none"/></svg>
<div style="left:998px;top:55px;width:42px;height:608px;background:#535353;"></div>
<div style="left:1043px;top:55px;width:354px;height:358px;background:#535353;"></div>
<div style="left:1117px;top:55px;width:280px;height:32px;background:#444444;"></div>
<div style="left:1117px;top:55px;width:1.5px;height:32px;background:#3a3a3a;"></div>
<div style="left:1117px;top:85.5px;width:280px;height:1.5px;background:#3a3a3a;"></div>
<div style="left:1182px;top:55px;width:1.5px;height:31px;background:#3a3a3a;"></div>
<div class="t" style="left:1053.3px;top:63.29px;font-size:11px;color:#ffffff;font-weight:700;letter-spacing:0px;transform:scaleX(1.0020);transform-origin:0 0;">Properties</div>
<div class="t" style="left:1127.5px;top:63.29px;font-size:11px;color:#b8b8b8;font-weight:700;letter-spacing:0px;transform:scaleX(0.9752);transform-origin:0 0;">Libraries</div>
<div style="left:1043px;top:417px;width:354px;height:246px;background:#535353;"></div>
<div style="left:1043px;top:417px;width:354px;height:31px;background:#444444;"></div>
<div style="left:1043px;top:446.5px;width:354px;height:1.5px;background:#3a3a3a;"></div>
<div style="left:1080px;top:417px;width:53px;height:31px;background:#535353;"></div>
<div style="left:1079px;top:417px;width:1.5px;height:31px;background:#3a3a3a;"></div>
<div style="left:1133px;top:417px;width:1.5px;height:30px;background:#3a3a3a;"></div>
<div style="left:1200px;top:417px;width:1.5px;height:30px;background:#3a3a3a;"></div>
<div class="t" style="left:1053.0px;top:424.49px;font-size:11px;color:#b8b8b8;font-weight:700;letter-spacing:0px;transform:scaleX(1.0554);transform-origin:0 0;">3D</div>
<div class="t" style="left:1090.7px;top:424.49px;font-size:11px;color:#ffffff;font-weight:700;letter-spacing:0px;transform:scaleX(0.9391);transform-origin:0 0;">Layers</div>
<div class="t" style="left:1143.3px;top:424.49px;font-size:11px;color:#b8b8b8;font-weight:700;letter-spacing:0px;transform:scaleX(0.9657);transform-origin:0 0;">Channels</div>
<svg style="position:absolute;left:0;top:0" width="1400" height="663"><path d="M316.3 195.2 L384.2 195.2 L384.6 214.4 L360.9 214.4 L359.3 326.5 L338.3 326.5 L337.1 214.4 L316.3 214.4 Z M391.9 195.2 L441.2 195.2 L440 214.2 L413 214.2 L413 245.6 L435.6 245.6 L435.6 264.2 L413 264.2 L413 308.3 L440.5 308.3 L440 326.5 L392.5 326.5 Z M449 195.2 L474 195.2 L484.8 236 L495.4 195.2 L516.5 195.2 L494.3 253 L519.6 326.5 L495.4 326.5 L480.3 282.3 L466.7 326.5 L444.5 326.5 L468 255 Z M520.3 195.2 L587.5 195.2 L587.8 214.4 L564 214.4 L564 326.5 L543 326.5 L543 214.4 L520.3 214.4 Z" fill="#d22a17" stroke="#d22a17" stroke-width="0.6" stroke-linejoin="round"/><rect x="314.5" y="326.3" width="275" height="1" fill="#8a8a8a"/><rect x="589.2" y="166" width="1" height="214" fill="#8a8a8a"/></svg>
<svg style="position:absolute;left:14px;top:80px;" width="17" height="17" viewBox="0 0 17 17"><path d="M8.5 2 V15 M2 8.5 H15" stroke="#e2e2e2" stroke-width="1.3" fill="none"/><path d="M8.5 0 L11.5 3.3 H5.5 Z M8.5 17 L11.5 13.7 H5.5 Z M0 8.5 L3.3 5.5 V11.5 Z M17 8.5 L13.7 5.5 V11.5 Z" fill="#e2e2e2"/></svg>
<svg style="position:absolute;left:11.5px;top:108.5px;" width="21" height="18.5" viewBox="0 0 21 18.5"><path d="M0 3 H3.5 M5.5 0 V15.5 H17.5 M5.5 3 H16.5 V18.5 M18.5 15.5 H21" stroke="#e2e2e2" stroke-width="1.7" fill="none"/></svg>
<svg style="position:absolute;left:33px;top:123px;" width="4" height="4" viewBox="0 0 4 4"><path d="M4 0 L4 4 L0 4 Z" fill="#cfcfcf"/></svg>
<svg style="position:absolute;left:13.5px;top:138px;" width="18" height="17" viewBox="0 0 18 17"><path d="M1.3 15.7 Q0 14.5 1.2 13 L8.6 5.6 L11.4 8.4 L4 15.8 Q2.6 17 1.3 15.7 Z" stroke="#e2e2e2" stroke-width="1.4" fill="none"/><path d="M7.4 4.4 L12.6 9.6" stroke="#e2e2e2" stroke-width="2"/><path d="M10 5.6 L13.6 2 Q15.6 0.4 16.8 1.6 Q18 3 16.4 4.8 L12.8 8.4 Z" fill="#e2e2e2"/></svg>
<svg style="position:absolute;left:33px;top:152px;" width="4" height="4" viewBox="0 0 4 4"><path d="M4 0 L4 4 L0 4 Z" fill="#cfcfcf"/></svg>
<svg style="position:absolute;left:12.5px;top:166px;" width="21" height="20" viewBox="0 0 21 20"><path d="M2.2 10.8 L8.8 4.4 L16.6 12.2 L10 18.6 Z" stroke="#e2e2e2" stroke-width="1.5" fill="none" stroke-linejoin="round"/><path d="M7.5 5.5 Q6 2 8 1 Q10.3 0 11.2 3 L11.2 8" stroke="#e2e2e2" stroke-width="1.3" fill="none"/><circle cx="11.2" cy="8.6" r="1.2" fill="#e2e2e2"/><path d="M17.8 12.8 Q19.8 15.6 18.6 17 Q17.2 18 16.6 16.4 Q16.4 15 17.8 12.8 Z" fill="#e2e2e2"/></svg>
<svg style="position:absolute;left:33px;top:181px;" width="4" height="4" viewBox="0 0 4 4"><path d="M4 0 L4 4 L0 4 Z" fill="#cfcfcf"/></svg>
<svg style="position:absolute;left:13px;top:198px;" width="19" height="15" viewBox="0 0 19 15"><rect x="1" y="1" width="17" height="13" stroke="#e2e2e2" stroke-width="1.8" fill="none" stroke-dasharray="3.2 2"/></svg>
<svg style="position:absolute;left:33px;top:210px;" width="4" height="4" viewBox="0 0 4 4"><path d="M4 0 L4 4 L0 4 Z" fill="#cfcfcf"/></svg>
<svg style="position:absolute;left:12px;top:224px;" width="22" height="22" viewBox="0 0 22 22"><path d="M1 4.3 L12 8.2 L18.4 1.1 L18.4 11.4 L10.4 14.2 Z" stroke="#e2e2e2" stroke-width="1.5" fill="none" stroke-linejoin="round"/><circle cx="8.8" cy="13.6" r="1.9" stroke="#e2e2e2" stroke-width="1.4" fill="#535353"/><path d="M7.2 15 L2.3 16.6 M8.4 15.6 L6.8 19.6" stroke="#e2e2e2" stroke-width="1.4" fill="none"/></svg>
<svg style="position:absolute;left:33px;top:240px;" width="4" height="4" viewBox="0 0 4 4"><path d="M4 0 L4 4 L0 4 Z" fill="#cfcfcf"/></svg>
<svg style="position:absolute;left:11px;top:256px;" width="24" height="18" viewBox="0 0 24 18"><ellipse cx="6.5" cy="9.5" rx="4.6" ry="6.4" stroke="#e2e2e2" stroke-width="1.5" stroke-dasharray="1.3 1.5" fill="none"/><path d="M21.6 0.8 Q22.4 1.4 21.4 3.2 L17.6 8.4 L15.4 7 L19.6 2 Q20.8 0.4 21.6 0.8 Z" fill="#e2e2e2"/><path d="M9.6 14.6 Q10.2 9.2 15.4 7.6 Q18.2 9 17 12.2 Q14.6 15 9.6 14.6 Z" fill="#e2e2e2"/></svg>
<svg style="position:absolute;left:33px;top:270px;" width="4" height="4" viewBox="0 0 4 4"><path d="M4 0 L4 4 L0 4 Z" fill="#cfcfcf"/></svg>
<svg style="position:absolute;left:13px;top:287.5px;" width="20" height="14" viewBox="0 0 20 14"><path d="M0.7 12.6 L9.4 5.6 L12.4 8.4 Z" fill="#e2e2e2"/><path d="M9.4 5.6 L12 3 L14.6 5.8 L12.4 8.4 Z" fill="#e2e2e2"/><path d="M9 0.5 H18.6 L14.6 5.6 H11.2 Z" fill="#9c9c9c"/></svg>
<svg style="position:absolute;left:33px;top:299px;" width="4" height="4" viewBox="0 0 4 4"><path d="M4 0 L4 4 L0 4 Z" fill="#cfcfcf"/></svg>
<svg style="position:absolute;left:12px;top:313px;" width="22" height="19" viewBox="0 0 22 19"><path d="M11 12 L20 1 L21 2 L13 14 Z" fill="#e2e2e2"/><path d="M2 18 Q3 12 8 11 Q12 12 11 15 Q8 18 2 18 Z" fill="#e2e2e2"/></svg>
<svg style="position:absolute;left:33px;top:328px;" width="4" height="4" viewBox="0 0 4 4"><path d="M4 0 L4 4 L0 4 Z" fill="#cfcfcf"/></svg>
<svg style="position:absolute;left:8px;top:338px;" width="32" height="28" viewBox="0 0 32 28"><circle cx="9.3" cy="9.3" r="5.6" stroke="#e2e2e2" stroke-width="1.5" stroke-dasharray="2.2 1.6" fill="none"/><path d="M8.2 21.6 L20.4 9.4" stroke="#444" stroke-width="7.6" stroke-linecap="round"/><path d="M8.2 21.6 L20.4 9.4" stroke="#e2e2e2" stroke-width="5.6" stroke-linecap="round"/><circle cx="13.2" cy="14.3" r="0.9" fill="#333"/><circle cx="16.9" cy="13.6" r="0.9" fill="#333"/><circle cx="12.6" cy="17.8" r="0.9" fill="#333"/><circle cx="15.5" cy="17" r="0.9" fill="#333"/></svg>
<svg style="position:absolute;left:33px;top:358px;" width="4" height="4" viewBox="0 0 4 4"><path d="M4 0 L4 4 L0 4 Z" fill="#cfcfcf"/></svg>
<svg style="position:absolute;left:12px;top:372px;" width="22" height="18" viewBox="0 0 22 18"><circle cx="11" cy="4" r="3.5" fill="#e2e2e2"/><rect x="9.5" y="6" width="3" height="4" fill="#e2e2e2"/><rect x="3" y="10" width="16" height="4" rx="1" fill="#e2e2e2"/><rect x="3" y="15.5" width="16" height="2" fill="#e2e2e2"/></svg>
<svg style="position:absolute;left:33px;top:388px;" width="4" height="4" viewBox="0 0 4 4"><path d="M4 0 L4 4 L0 4 Z" fill="#cfcfcf"/></svg>
<svg style="position:absolute;left:12px;top:402px;" width="22" height="17" viewBox="0 0 22 17"><path d="M2 12 L11 3 Q13 1 15 3 L18 6 Q19 8 17 9 L10 16 H5 Z" stroke="#e2e2e2" stroke-width="1.5" fill="none"/><path d="M11 3 Q13 1 15 3 L18 6 Q19 8 17 9 L14 12 L8 6 Z" fill="#e2e2e2"/><path d="M10 16 H22" stroke="#e2e2e2" stroke-width="1.3"/></svg>
<svg style="position:absolute;left:33px;top:417px;" width="4" height="4" viewBox="0 0 4 4"><path d="M4 0 L4 4 L0 4 Z" fill="#cfcfcf"/></svg>
<div style="left:0px;top:420px;width:46px;height:42px;background:transparent;border:4.3px solid #ff0000;"></div>
<div style="left:4px;top:426px;width:37px;height:30px;background:#333333;border:1px solid #5e5e5e;border-radius:2px;"></div>
<svg style="position:absolute;left:15px;top:432.5px;" width="16" height="17" viewBox="0 0 16 17"><path d="M0 0 H15.8 V5 H13.8 V2.2 H9.1 V14.4 H12 V16.4 H3.8 V14.4 H6.7 V2.2 H2 V5 H0 Z" fill="#e2e2e2"/></svg>
<svg style="position:absolute;left:33px;top:447px;" width="4" height="4" viewBox="0 0 4 4"><path d="M4 0 L4 4 L0 4 Z" fill="#cfcfcf"/></svg>
<svg style="position:absolute;left:8px;top:456px;" width="32" height="28" viewBox="0 0 32 28"><path d="M9.5 6 H21.6 Q22.8 12 20.5 15.6 Q18.6 17.6 16.4 17.2 L15.2 15.4 Q17.2 14 18 12 L17 11.4 L9.4 20.6 Q8.2 21.8 7.4 20.8 Q6.8 19.8 7.8 18.6 L13.6 11.6 Q10.4 12.6 9 11 Q8 9 9.5 6 Z" fill="#e2e2e2"/></svg>
<svg style="position:absolute;left:33px;top:476px;" width="4" height="4" viewBox="0 0 4 4"><path d="M4 0 L4 4 L0 4 Z" fill="#cfcfcf"/></svg>
<svg style="position:absolute;left:14px;top:491px;" width="17" height="17" viewBox="0 0 17 17"><path d="M1 15 L3 8 L9 3 L14 8 L9 14 Z" stroke="#e2e2e2" stroke-width="1.5" fill="none" stroke-linejoin="round"/><path d="M10 2 L12 0 L17 5 L15 7 Z" fill="#e2e2e2"/><circle cx="7" cy="10" r="1.3" fill="#e2e2e2"/><path d="M1 15 L6 11" stroke="#e2e2e2" stroke-width="1.1"/></svg>
<svg style="position:absolute;left:33px;top:506px;" width="4" height="4" viewBox="0 0 4 4"><path d="M4 0 L4 4 L0 4 Z" fill="#cfcfcf"/></svg>
<svg style="position:absolute;left:16px;top:519px;" width="13" height="18" viewBox="0 0 13 18"><path d="M1 1 L12 10 L7.5 10.5 L10 16.5 L8 17.5 L5.5 11.5 L1 15 Z" fill="#e2e2e2"/></svg>
<svg style="position:absolute;left:33px;top:535px;" width="4" height="4" viewBox="0 0 4 4"><path d="M4 0 L4 4 L0 4 Z" fill="#cfcfcf"/></svg>
<svg style="position:absolute;left:13px;top:550px;" width="20" height="15" viewBox="0 0 20 15"><rect x="1" y="1" width="18" height="13" fill="#6a6a6a" stroke="#e0e0e0" stroke-width="1.6"/></svg>
<svg style="position:absolute;left:33px;top:564px;" width="4" height="4" viewBox="0 0 4 4"><path d="M4 0 L4 4 L0 4 Z" fill="#cfcfcf"/></svg>
<svg style="position:absolute;left:13px;top:585px;" width="19" height="6" viewBox="0 0 19 6"><circle cx="3" cy="3" r="2.3" fill="#e2e2e2"/><circle cx="9.5" cy="3" r="2.3" fill="#e2e2e2"/><circle cx="16" cy="3" r="2.3" fill="#e2e2e2"/></svg>
<svg style="position:absolute;left:33px;top:594px;" width="4" height="4" viewBox="0 0 4 4"><path d="M4 0 L4 4 L0 4 Z" fill="#cfcfcf"/></svg>
<svg style="position:absolute;left:5px;top:609px;" width="13" height="12" viewBox="0 0 13 12"><rect x="4.5" y="4.5" width="7.5" height="7" fill="#e6e6e6" stroke="#e6e6e6"/><rect x="1" y="1" width="7" height="7" fill="#111" stroke="#e6e6e6" stroke-width="1.4"/></svg>
<svg style="position:absolute;left:25px;top:609px;" width="12" height="12" viewBox="0 0 12 12"><path d="M1 4 H8 Q10 4 10 6 V11 M8 9 L10 11.5 L12 9 M3 2 L1 4 L3 6" stroke="#e2e2e2" stroke-width="1.3" fill="none"/></svg>
<div style="left:17px;top:637px;width:22px;height:22px;background:#ffffff;border:1px solid #3a3a3a;border-radius:2px;"></div>
<div style="left:5px;top:626px;width:23px;height:22px;background:#000000;border:1.6px solid #f0f0f0;border-radius:2px;"></div>
<div style="left:998px;top:55px;width:42px;height:44px;background:#535353;"></div>
<div style="left:998px;top:101.5px;width:42px;height:76.5px;background:#535353;"></div>
<div style="left:998px;top:180px;width:42px;height:44px;background:#535353;"></div>
<div style="left:998px;top:226.5px;width:42px;height:75.5px;background:#535353;"></div>
<div style="left:998px;top:304px;width:42px;height:45.5px;background:#535353;"></div>
<div style="left:998px;top:351.5px;width:42px;height:311.5px;background:#535353;"></div>
<div style="left:998px;top:99px;width:42px;height:2.5px;background:#424242;"></div>
<div style="left:998px;top:178px;width:42px;height:2px;background:#424242;"></div>
<div style="left:998px;top:224px;width:42px;height:2.5px;background:#424242;"></div>
<div style="left:998px;top:302px;width:42px;height:2px;background:#424242;"></div>
<div style="left:998px;top:349.5px;width:42px;height:2.0px;background:#424242;"></div>
<svg style="position:absolute;left:1009px;top:60px;" width="21" height="3" viewBox="0 0 21 3"><rect x="0.0" y="0" width="1" height="3" fill="#454545"/><rect x="2.5" y="0" width="1" height="3" fill="#454545"/><rect x="5.0" y="0" width="1" height="3" fill="#454545"/><rect x="7.5" y="0" width="1" height="3" fill="#454545"/><rect x="10.0" y="0" width="1" height="3" fill="#454545"/><rect x="12.5" y="0" width="1" height="3" fill="#454545"/><rect x="15.0" y="0" width="1" height="3" fill="#454545"/><rect x="17.5" y="0" width="1" height="3" fill="#454545"/><rect x="20.0" y="0" width="1" height="3" fill="#454545"/></svg>
<svg style="position:absolute;left:1009px;top:106px;" width="21" height="3" viewBox="0 0 21 3"><rect x="0.0" y="0" width="1" height="3" fill="#454545"/><rect x="2.5" y="0" width="1" height="3" fill="#454545"/><rect x="5.0" y="0" width="1" height="3" fill="#454545"/><rect x="7.5" y="0" width="1" height="3" fill="#454545"/><rect x="10.0" y="0" width="1" height="3" fill="#454545"/><rect x="12.5" y="0" width="1" height="3" fill="#454545"/><rect x="15.0" y="0" width="1" height="3" fill="#454545"/><rect x="17.5" y="0" width="1" height="3" fill="#454545"/><rect x="20.0" y="0" width="1" height="3" fill="#454545"/></svg>
<svg style="position:absolute;left:1009px;top:184px;" width="21" height="3" viewBox="0 0 21 3"><rect x="0.0" y="0" width="1" height="3" fill="#454545"/><rect x="2.5" y="0" width="1" height="3" fill="#454545"/><rect x="5.0" y="0" width="1" height="3" fill="#454545"/><rect x="7.5" y="0" width="1" height="3" fill="#454545"/><rect x="10.0" y="0" width="1" height="3" fill="#454545"/><rect x="12.5" y="0" width="1" height="3" fill="#454545"/><rect x="15.0" y="0" width="1" height="3" fill="#454545"/><rect x="17.5" y="0" width="1" height="3" fill="#454545"/><rect x="20.0" y="0" width="1" height="3" fill="#454545"/></svg>
<svg style="position:absolute;left:1009px;top:231px;" width="21" height="3" viewBox="0 0 21 3"><rect x="0.0" y="0" width="1" height="3" fill="#454545"/><rect x="2.5" y="0" width="1" height="3" fill="#454545"/><rect x="5.0" y="0" width="1" height="3" fill="#454545"/><rect x="7.5" y="0" width="1" height="3" fill="#454545"/><rect x="10.0" y="0" width="1" height="3" fill="#454545"/><rect x="12.5" y="0" width="1" height="3" fill="#454545"/><rect x="15.0" y="0" width="1" height="3" fill="#454545"/><rect x="17.5" y="0" width="1" height="3" fill="#454545"/><rect x="20.0" y="0" width="1" height="3" fill="#454545"/></svg>
<svg style="position:absolute;left:1009px;top:308px;" width="21" height="3" viewBox="0 0 21 3"><rect x="0.0" y="0" width="1" height="3" fill="#454545"/><rect x="2.5" y="0" width="1" height="3" fill="#454545"/><rect x="5.0" y="0" width="1" height="3" fill="#454545"/><rect x="7.5" y="0" width="1" height="3" fill="#454545"/><rect x="10.0" y="0" width="1" height="3" fill="#454545"/><rect x="12.5" y="0" width="1" height="3" fill="#454545"/><rect x="15.0" y="0" width="1" height="3" fill="#454545"/><rect x="17.5" y="0" width="1" height="3" fill="#454545"/><rect x="20.0" y="0" width="1" height="3" fill="#454545"/></svg>
<svg style="position:absolute;left:1009.5px;top:71px;" width="21" height="20" viewBox="0 0 21 20"><rect x="0.7" y="0.7" width="5" height="5" stroke="#e2e2e2" stroke-width="1.3" fill="none"/><circle cx="3.2" cy="3.2" r="1.3" fill="#e2e2e2"/><rect x="0.7" y="7.2" width="5" height="5" stroke="#e2e2e2" stroke-width="1.3" fill="none"/><circle cx="3.2" cy="9.7" r="1.3" fill="#e2e2e2"/><rect x="0" y="13.5" width="6.4" height="6.4" fill="#e2e2e2"/><path d="M10.6 17.6 Q17.5 13 15.6 6.4 Q14.6 4.4 12.6 4.6" stroke="#e2e2e2" stroke-width="1.8" fill="none"/><path d="M10 3.2 L14.4 1.6 L13.8 7.4 Z" fill="#e2e2e2"/></svg>
<svg style="position:absolute;left:1007px;top:116px;" width="25" height="21" viewBox="0 0 25 21"><circle cx="1.3" cy="1.8" r="1" fill="#e2e2e2"/><rect x="3.0999999999999996" y="1.1" width="5.6" height="1.3" fill="#e2e2e2"/><circle cx="1.3" cy="5.6" r="1" fill="#e2e2e2"/><rect x="3.0999999999999996" y="4.9" width="5.6" height="1.3" fill="#e2e2e2"/><circle cx="1.3" cy="9.4" r="1" fill="#e2e2e2"/><rect x="3.0999999999999996" y="8.8" width="5.6" height="1.3" fill="#e2e2e2"/><path d="M14.6 14.2 L23.2 4.6 Q24.4 3.8 24 5.2 L16.4 15.8 Z" fill="#e2e2e2"/><path d="M5.4 20.4 Q6 15.6 9.8 14.2 Q13.6 13.8 14.6 16.2 Q13 20 5.4 20.4 Z" fill="#e2e2e2"/></svg>
<svg style="position:absolute;left:1005.5px;top:150px;" width="25" height="20" viewBox="0 0 25 20"><path d="M0.3 3.4 Q4.6 -0.6 10.8 2.6 Q11.6 3.4 10.8 4.2 Q4.6 7.4 0.3 3.4 Z" fill="#e2e2e2"/><rect x="12" y="2.6" width="11.4" height="1.9" fill="#e2e2e2"/><rect x="2.6" y="12.2" width="11.4" height="1.9" fill="#e2e2e2"/><path d="M14.6 13.2 L23.6 7.4 Q26 13.2 23.6 19 Z" fill="#e2e2e2"/></svg>
<svg style="position:absolute;left:1007px;top:195px;" width="24" height="20" viewBox="0 0 24 20"><circle cx="1.3" cy="1.2" r="1" fill="#e2e2e2"/><rect x="3.0999999999999996" y="0.6" width="5.6" height="1.3" fill="#e2e2e2"/><circle cx="1.3" cy="5.0" r="1" fill="#e2e2e2"/><rect x="3.0999999999999996" y="4.3" width="5.6" height="1.3" fill="#e2e2e2"/><circle cx="1.3" cy="8.8" r="1" fill="#e2e2e2"/><rect x="3.0999999999999996" y="8.2" width="5.6" height="1.3" fill="#e2e2e2"/><circle cx="13.6" cy="5" r="3.3" fill="#e2e2e2"/><rect x="12.4" y="7" width="2.4" height="4.4" fill="#e2e2e2"/><path d="M6.6 15.8 Q6.6 11.4 10 11.4 H17.4 Q21.6 11.4 21.6 15.8 Z" fill="#e2e2e2"/><rect x="6.6" y="17.6" width="15" height="1.7" fill="#e2e2e2"/></svg>
<div class="t" style="left:1010.3px;top:240.69px;font-size:19.5px;color:#e2e2e2;font-weight:400;letter-spacing:0px;transform:scaleX(1.0692);transform-origin:0 0;">A</div>
<div style="left:1025.3px;top:241.3px;width:1.4px;height:18.8px;background:#e2e2e2;"></div>
<svg style="position:absolute;left:1012px;top:274px;" width="13" height="18" viewBox="0 0 13 18"><path d="M6.4 0.2 Q0.2 0.2 0.2 5.4 Q0.2 10.6 6.4 10.6 Z" fill="#e2e2e2"/><rect x="6.6" y="0.2" width="1.8" height="17.4" fill="#e2e2e2"/><rect x="10.2" y="0.2" width="1.8" height="17.4" fill="#e2e2e2"/><rect x="6.4" y="0" width="5.6" height="1.6" fill="#e2e2e2"/></svg>
<svg style="position:absolute;left:1005px;top:316px;" width="24" height="24" viewBox="0 0 24 24"><path d="M7.6 8.2 L18.6 14.4" stroke="#e2e2e2" stroke-width="2.2" stroke-linecap="round"/><circle cx="20.7" cy="15.3" r="2.5" stroke="#e2e2e2" stroke-width="1.7" fill="#535353"/><circle cx="5.4" cy="6.2" r="3.6" fill="#e2e2e2"/><rect x="1.4" y="5.2" width="4.4" height="1.8" fill="#535353"/><path d="M11.6 15.2 L21.6 4.8" stroke="#535353" stroke-width="3.2" stroke-linecap="round"/><path d="M5 21 L11.5 15.3" stroke="#e2e2e2" stroke-width="3.6" stroke-linecap="round"/><path d="M11.5 15.3 L21.6 4.9" stroke="#e2e2e2" stroke-width="1.7" stroke-linecap="round"/></svg>
<svg style="position:absolute;left:1379px;top:66px;" width="13" height="10" viewBox="0 0 13 10"><rect x="0" y="0.0" width="12" height="1.3" fill="#d0d0d0"/><rect x="0" y="2.3" width="12" height="1.3" fill="#d0d0d0"/><rect x="0" y="4.6" width="12" height="1.3" fill="#d0d0d0"/><rect x="0" y="6.9" width="12" height="1.3" fill="#d0d0d0"/></svg>
<div style="left:1055px;top:94px;width:26px;height:25px;background:#383838;border:1px solid #4c4c4c;border-radius:3px;"></div>
<svg style="position:absolute;left:1061px;top:99.5px;" width="14" height="14" viewBox="0 0 14 14"><path d="M0 0 H13.6 V4.4 H11.8 V2 H7.9 V11.8 H10.3 V13.6 H3.3 V11.8 H5.7 V2 H1.8 V4.4 H0 Z" fill="#e2e2e2"/></svg>
<div class="t" style="left:1087.2px;top:101.24px;font-size:12px;color:#d0d0d0;font-weight:400;letter-spacing:0px;transform:scaleX(0.9163);transform-origin:0 0;">Type Layer</div>
<div style="left:1043px;top:123.5px;width:354px;height:2px;background:#424242;"></div>
<svg style="position:absolute;left:1053px;top:136px;" width="5" height="10" viewBox="0 0 5 10"><path d="M0.8 0.8 L4 5 L0.8 9.2" stroke="#d8d8d8" stroke-width="1.2" fill="none"/></svg>
<div class="t" style="left:1069.4px;top:134.97px;font-size:11.5px;color:#ececec;font-weight:700;letter-spacing:0px;transform:scaleX(1.0373);transform-origin:0 0;">Transform</div>
<svg style="position:absolute;left:1254px;top:132px;" width="18" height="17" viewBox="0 0 18 17"><path d="M5.2 8 A4.6 4.6 0 1 1 13.2 12.2" stroke="#a2a2a2" stroke-width="1.9" fill="none"/><path d="M1.6 7.4 H8.4 L5 11.8 Z" fill="#a2a2a2"/><rect x="2" y="14" width="14" height="1.9" fill="#a2a2a2"/></svg>
<div style="left:1043px;top:159.5px;width:354px;height:2px;background:#424242;"></div>
<svg style="position:absolute;left:1052px;top:173px;" width="9" height="6" viewBox="0 0 9 6"><path d="M0.8 0.8 L4.5 4.8 L8.2 0.8" stroke="#d8d8d8" stroke-width="1.3" fill="none"/></svg>
<div class="t" style="left:1068.7px;top:171.17px;font-size:11.5px;color:#ececec;font-weight:700;letter-spacing:0px;transform:scaleX(1.0237);transform-origin:0 0;">Character</div>
<div style="left:1052.7px;top:195.4px;width:218px;height:18.5px;background:#434343;border:1px solid #656565;border-radius:3px;"></div>
<div class="t" style="left:1057.7px;top:198.92px;font-size:12.5px;color:#e8e8e8;font-weight:400;letter-spacing:0px;transform:scaleX(0.8769);transform-origin:0 0;">Yanone Kaffeesatz</div>
<div style="left:1253.2px;top:196.4px;width:1.6px;height:16.5px;background:#656565;"></div>
<svg style="position:absolute;left:1259.0px;top:203.65px;" width="8" height="5" viewBox="0 0 8 5"><path d="M1 1 L4 4 L7 1" stroke="#e6e6e6" stroke-width="1.5" fill="none"/></svg>
<div style="left:1052.7px;top:223.5px;width:218px;height:18.3px;background:#454545;border:1px solid #606060;border-radius:3px;"></div>
<div class="t" style="left:1056.8px;top:226.62px;font-size:12.5px;color:#e8e8e8;font-weight:400;letter-spacing:0px;transform:scaleX(0.9017);transform-origin:0 0;">Bold</div>
<div style="left:1253.2px;top:224.5px;width:1.6px;height:16.3px;background:#606060;"></div>
<svg style="position:absolute;left:1259.0px;top:231.65px;" width="8" height="5" viewBox="0 0 8 5"><path d="M1 1 L4 4 L7 1" stroke="#6f6f6f" stroke-width="1.5" fill="none"/></svg>
<svg style="position:absolute;left:1053.6px;top:257.5px;" width="19" height="15" viewBox="0 0 19 15"><path d="M5.5 0 H18.6 V4 H16.9 V1.8 H13.2 V13.2 H15.6 V14.8 H8.7 V13.2 H11.1 V1.8 H7.3 V4 H5.5 Z" fill="#e8e8e8"/><path d="M0 8 H7 V10.3 H6 V9.6 H4.3 V13.4 H5.5 V14.8 H1.5 V13.4 H2.7 V9.6 H1 V10.3 H0 Z" fill="#e8e8e8"/></svg>
<div style="left:1079.4px;top:255.4px;width:68.5px;height:18.5px;background:#434343;border:1px solid #656565;border-radius:3px;"></div>
<div class="t" style="left:1084.8px;top:258.92px;font-size:12.5px;color:#e8e8e8;font-weight:400;letter-spacing:0px;transform:scaleX(0.9240);transform-origin:0 0;">200 pt</div>
<div style="left:1130.4px;top:256.4px;width:1.6px;height:16.5px;background:#656565;"></div>
<svg style="position:absolute;left:1136.2px;top:263.65px;" width="8" height="5" viewBox="0 0 8 5"><path d="M1 1 L4 4 L7 1" stroke="#e6e6e6" stroke-width="1.5" fill="none"/></svg>
<svg style="position:absolute;left:1176px;top:255px;" width="18" height="19" viewBox="0 0 18 19"><path d="M8 0.5 L5 6 M8 0.5 L11 6 M6 4 H10 M3.5 7 H17 M8 10 L5 16 M8 10 L11 16 M6 13.5 H10 M3.5 17.5 H17" stroke="#e6e6e6" stroke-width="1.3" fill="none"/><path d="M1.5 9 V17 M0 10.5 L1.5 9 L3 10.5 M0 15.5 L1.5 17 L3 15.5" stroke="#e6e6e6" stroke-width="1.1" fill="none"/></svg>
<div style="left:1202px;top:255.4px;width:69px;height:18.5px;background:#434343;border:1px solid #656565;border-radius:3px;"></div>
<div class="t" style="left:1207.3px;top:259.32px;font-size:12.5px;color:#e8e8e8;font-weight:400;letter-spacing:0px;transform:scaleX(0.9284);transform-origin:0 0;">22 pt</div>
<div style="left:1253.5px;top:256.4px;width:1.6px;height:16.5px;background:#656565;"></div>
<svg style="position:absolute;left:1259.3px;top:263.65px;" width="8" height="5" viewBox="0 0 8 5"><path d="M1 1 L4 4 L7 1" stroke="#e6e6e6" stroke-width="1.5" fill="none"/></svg>
<div class="t" style="left:1053px;top:284px;font-size:14px;color:#e6e6e6;font-weight:400;letter-spacing:-1.5px;">V/A</div>
<svg style="position:absolute;left:1062px;top:297px;" width="12" height="5" viewBox="0 0 12 5"><path d="M11 2.5 H1 M3 0.5 L1 2.5 L3 4.5" stroke="#e6e6e6" stroke-width="1.1" fill="none"/></svg>
<div style="left:1079.4px;top:283.5px;width:68.5px;height:18.5px;background:#434343;border:1px solid #656565;border-radius:3px;"></div>
<div class="t" style="left:1083.9px;top:286.52px;font-size:12.5px;color:#e8e8e8;font-weight:400;letter-spacing:0px;transform:scaleX(0.9045);transform-origin:0 0;">Metrics</div>
<div style="left:1130.4px;top:284.5px;width:1.6px;height:16.5px;background:#656565;"></div>
<svg style="position:absolute;left:1136.2px;top:291.75px;" width="8" height="5" viewBox="0 0 8 5"><path d="M1 1 L4 4 L7 1" stroke="#e6e6e6" stroke-width="1.5" fill="none"/></svg>
<svg style="position:absolute;left:1176px;top:283px;" width="20" height="20" viewBox="0 0 20 20"><rect x="0" y="0" width="20" height="13" fill="#e6e6e6"/><path d="M2 2 L5 11 L8 2 M9.5 11 L12.5 2 L15.5 11 M10.5 8 H14.5" stroke="#535353" stroke-width="1.6" fill="none"/><path d="M1 17 H19 M3 15 L1 17 L3 19 M17 15 L19 17 L17 19" stroke="#e6e6e6" stroke-width="1.2" fill="none"/></svg>
<div style="left:1202px;top:283.5px;width:69px;height:18.5px;background:#434343;border:1px solid #656565;border-radius:3px;"></div>
<div class="t" style="left:1207.3px;top:286.82px;font-size:12.5px;color:#e8e8e8;font-weight:400;letter-spacing:0px;transform:scaleX(0.9143);transform-origin:0 0;">0</div>
<div style="left:1253.5px;top:284.5px;width:1.6px;height:16.5px;background:#656565;"></div>
<svg style="position:absolute;left:1259.3px;top:291.75px;" width="8" height="5" viewBox="0 0 8 5"><path d="M1 1 L4 4 L7 1" stroke="#e6e6e6" stroke-width="1.5" fill="none"/></svg>
<div class="t" style="left:1170.8px;top:313.94px;font-size:12px;color:#d8d8d8;font-weight:400;letter-spacing:0px;transform:scaleX(0.8926);transform-origin:0 0;">Color</div>
<div style="left:1202px;top:309px;width:70px;height:20px;background:#d42a16;border:1px solid #3d3d3d;"></div>
<svg style="position:absolute;left:1252px;top:348px;" width="15" height="4" viewBox="0 0 15 4"><circle cx="2" cy="2" r="1.7" fill="#f0f0f0"/><circle cx="7.5" cy="2" r="1.7" fill="#f0f0f0"/><circle cx="13" cy="2" r="1.7" fill="#f0f0f0"/></svg>
<div style="left:1043px;top:370.5px;width:336px;height:2px;background:#424242;"></div>
<div style="left:1069px;top:384px;width:6.5px;height:1.8px;background:#f0f0f0;"></div>
<div style="left:1121px;top:384px;width:2px;height:2px;background:#f0f0f0;"></div>
<div style="left:1379px;top:125.5px;width:18px;height:260px;background:#4f4f4f;"></div>
<svg style="position:absolute;left:1384px;top:133px;" width="10" height="6" viewBox="0 0 10 6"><path d="M1 5 L5 1 L9 5" stroke="#cfcfcf" stroke-width="1.2" fill="none"/></svg>
<div style="left:1381px;top:146px;width:14px;height:58px;background:#696969;"></div>
<svg style="position:absolute;left:1384px;top:371px;" width="10" height="6" viewBox="0 0 10 6"><path d="M1 1 L5 5 L9 1" stroke="#cfcfcf" stroke-width="1.2" fill="none"/></svg>
<svg style="position:absolute;left:1379px;top:428px;" width="13" height="10" viewBox="0 0 13 10"><rect x="0" y="0.0" width="12" height="1.3" fill="#d0d0d0"/><rect x="0" y="2.3" width="12" height="1.3" fill="#d0d0d0"/><rect x="0" y="4.6" width="12" height="1.3" fill="#d0d0d0"/><rect x="0" y="6.9" width="12" height="1.3" fill="#d0d0d0"/></svg>
<div style="left:1047.3px;top:458.6px;width:97px;height:18.8px;background:#4b4b4b;border:1px solid #5a5a5a;border-radius:3px;"></div>
<div class="t" style="left:1071.5px;top:461.12px;font-size:12.5px;color:#8a8a8a;font-weight:400;letter-spacing:0px;transform:scaleX(0.9017);transform-origin:0 0;">Kind</div>
<svg style="position:absolute;left:1132.6px;top:467.0px;" width="8" height="5" viewBox="0 0 8 5"><path d="M1 1 L4 4 L7 1" stroke="#6f6f6f" stroke-width="1.5" fill="none"/></svg>
<svg style="position:absolute;left:1053px;top:462px;" width="12" height="12" viewBox="0 0 12 12"><circle cx="5" cy="5" r="3.8" stroke="#8a8a8a" stroke-width="1.5" fill="none"/><path d="M7.8 7.8 L11 11" stroke="#8a8a8a" stroke-width="1.8"/></svg>
<svg style="position:absolute;left:1158.3px;top:462.4px;" width="13.5" height="11.5" viewBox="0 0 13.5 11.5"><rect x="0.7" y="0.7" width="12.1" height="10.1" rx="0.8" stroke="#a8a8a8" stroke-width="1.4" fill="none"/><path d="M3 8.6 L4.6 5.2 L6 7 L7.6 4.6 L9.6 8.6 Z" fill="#a8a8a8"/></svg>
<svg style="position:absolute;left:1185.6px;top:462px;" width="12.5" height="12.5" viewBox="0 0 12.5 12.5"><circle cx="6.25" cy="6.25" r="5.5" stroke="#a8a8a8" stroke-width="1.4" fill="none"/><path d="M10.1 2.4 A5.5 5.5 0 0 1 2.4 10.1 Z" fill="#a8a8a8"/></svg>
<svg style="position:absolute;left:1213.7px;top:462.6px;" width="11" height="12" viewBox="0 0 11 12"><path d="M0 0 H11 V3.6 H9.5 V1.7 H6.4 V10.3 H8.2 V11.8 H2.8 V10.3 H4.6 V1.7 H1.5 V3.6 H0 Z" fill="#a8a8a8"/></svg>
<svg style="position:absolute;left:1239.5px;top:462.5px;" width="13" height="13" viewBox="0 0 13 13"><rect x="1.8" y="1.8" width="9.4" height="9.4" stroke="#a8a8a8" stroke-width="1.3" fill="none"/><circle cx="1.8" cy="1.8" r="1.5" stroke="#a8a8a8" stroke-width="1" fill="#535353"/><circle cx="11.2" cy="1.8" r="1.5" stroke="#a8a8a8" stroke-width="1" fill="#535353"/><circle cx="1.8" cy="11.2" r="1.5" stroke="#a8a8a8" stroke-width="1" fill="#535353"/><circle cx="11.2" cy="11.2" r="1.5" stroke="#a8a8a8" stroke-width="1" fill="#535353"/></svg>
<svg style="position:absolute;left:1267.8px;top:462px;" width="12.5" height="14" viewBox="0 0 12.5 14"><path d="M3.6 0.7 H8.6 L11.8 3.9 V11.6 H3.6 Z" stroke="#a8a8a8" stroke-width="1.3" fill="none"/><path d="M8.3 0.7 V4.2 H11.8" stroke="#a8a8a8" stroke-width="1" fill="none"/><rect x="0" y="6.6" width="6.4" height="6.8" fill="#a8a8a8" stroke="#535353" stroke-width="0.8"/></svg>
<svg style="position:absolute;left:1293.5px;top:458px;" width="11" height="21" viewBox="0 0 11 21"><rect x="1" y="4" width="9" height="16" rx="4.5" stroke="#4c4c4c" stroke-width="1.1" fill="#505050"/><circle cx="5.5" cy="5.5" r="5" fill="#a4a4a4"/></svg>
<div style="left:1043px;top:483px;width:354px;height:1.5px;background:#424242;"></div>
<div style="left:1046.8px;top:490.4px;width:145.5px;height:18.3px;background:#434343;border:1px solid #656565;border-radius:3px;"></div>
<div class="t" style="left:1055.87px;top:493.02px;font-size:12.5px;color:#e8e8e8;font-weight:400;letter-spacing:0px;transform:scaleX(0.9271);transform-origin:0 0;">Normal</div>
<svg style="position:absolute;left:1180.6px;top:498.54999999999995px;" width="8" height="5" viewBox="0 0 8 5"><path d="M1 1 L4 4 L7 1" stroke="#e6e6e6" stroke-width="1.5" fill="none"/></svg>
<div class="t" style="left:1200.7px;top:493.42px;font-size:12.5px;color:#d0d0d0;font-weight:400;letter-spacing:0px;transform:scaleX(0.8969);transform-origin:0 0;">Opacity:</div>
<div style="left:1246.6px;top:490.4px;width:56px;height:18.3px;background:#434343;border:1px solid #656565;border-radius:3px;"></div>
<div class="t" style="left:1249.7px;top:493.92px;font-size:12.5px;color:#e8e8e8;font-weight:400;letter-spacing:0px;transform:scaleX(0.9229);transform-origin:0 0;">100%</div>
<div style="left:1285.1px;top:491.4px;width:1.6px;height:16.3px;background:#656565;"></div>
<svg style="position:absolute;left:1290.8999999999999px;top:498.54999999999995px;" width="8" height="5" viewBox="0 0 8 5"><path d="M1 1 L4 4 L7 1" stroke="#e6e6e6" stroke-width="1.5" fill="none"/></svg>
<div style="left:1043px;top:514.5px;width:354px;height:1.5px;background:#424242;"></div>
<div class="t" style="left:1049.11px;top:525.52px;font-size:12.5px;color:#8a8a8a;font-weight:400;letter-spacing:0px;transform:scaleX(0.8907);transform-origin:0 0;">Lock:</div>
<svg style="position:absolute;left:1086.7px;top:524.7px;" width="13" height="13" viewBox="0 0 13 13"><rect x="0" y="0" width="13" height="13" rx="1" fill="#a8a8a8"/><rect x="1.6" y="1.6" width="3.2" height="3.2" fill="#3e3e3e"/><rect x="8.2" y="1.6" width="3.2" height="3.2" fill="#3e3e3e"/><rect x="4.9" y="4.9" width="3.2" height="3.2" fill="#3e3e3e"/><rect x="1.6" y="8.2" width="3.2" height="3.2" fill="#3e3e3e"/><rect x="8.2" y="8.2" width="3.2" height="3.2" fill="#3e3e3e"/></svg>
<svg style="position:absolute;left:1111.3px;top:523.8px;" width="15.5" height="16" viewBox="0 0 15.5 16"><path d="M6.2 9.6 L13.4 0.8 Q14.8 -0.2 15 1.4 L8.4 11.4 Z" fill="#a8a8a8"/><path d="M0.4 15.6 Q0.6 10.6 4.6 9.8 Q8 10.2 7.6 12.8 Q6 15.6 0.4 15.6 Z" fill="#a8a8a8"/></svg>
<svg style="position:absolute;left:1135px;top:523.8px;" width="14.5" height="15" viewBox="0 0 14.5 15"><path d="M7.25 2.5 V12.5 M2.5 7.5 H12" stroke="#a8a8a8" stroke-width="1.5" fill="none"/><path d="M7.25 0 L10.3 3.4 H4.2 Z M7.25 15 L10.3 11.6 H4.2 Z M0 7.5 L3.4 4.4 V10.6 Z M14.5 7.5 L11.1 4.4 V10.6 Z" fill="#a8a8a8"/></svg>
<svg style="position:absolute;left:1159px;top:524.3px;" width="16.5" height="13.5" viewBox="0 0 16.5 13.5"><path d="M3.2 3 H10.6 L13.4 5.8 V10.6 H3.2 Z" stroke="#a8a8a8" stroke-width="1.4" fill="none" stroke-linejoin="round"/><circle cx="1" cy="2" r="0.9" fill="#a8a8a8"/><circle cx="13.6" cy="1" r="0.9" fill="#a8a8a8"/><circle cx="15.5" cy="2" r="0.9" fill="#a8a8a8"/><circle cx="1" cy="11.2" r="0.9" fill="#a8a8a8"/><circle cx="3" cy="13" r="0.9" fill="#a8a8a8"/><circle cx="13.6" cy="13" r="0.9" fill="#a8a8a8"/><circle cx="15.5" cy="11.2" r="0.9" fill="#a8a8a8"/></svg>
<svg style="position:absolute;left:1186.7px;top:524.3px;" width="11.6" height="13" viewBox="0 0 11.6 13"><path d="M2.8 5.6 V3.8 Q2.8 0.8 5.8 0.8 Q8.8 0.8 8.8 3.8 V5.6" stroke="#a8a8a8" stroke-width="1.6" fill="none"/><rect x="0" y="5" width="11.6" height="8" rx="1" fill="#a8a8a8"/><circle cx="5.8" cy="9" r="1.2" fill="#3e3e3e"/></svg>
<div class="t" style="left:1222.93px;top:525.12px;font-size:12.5px;color:#d0d0d0;font-weight:400;letter-spacing:0px;transform:scaleX(0.9740);transform-origin:0 0;">Fill:</div>
<div style="left:1246.6px;top:522.1px;width:56px;height:18.1px;background:#4a4a4a;border:1px solid #656565;border-radius:3px;"></div>
<div class="t" style="left:1249.7px;top:525.32px;font-size:12.5px;color:#777777;font-weight:400;letter-spacing:0px;transform:scaleX(0.9229);transform-origin:0 0;">100%</div>
<div style="left:1285.1px;top:523.1px;width:1.6px;height:16.1px;background:#656565;"></div>
<svg style="position:absolute;left:1290.8999999999999px;top:530.15px;" width="8" height="5" viewBox="0 0 8 5"><path d="M1 1 L4 4 L7 1" stroke="#e6e6e6" stroke-width="1.5" fill="none"/></svg>
<div style="left:1043px;top:546.5px;width:354px;height:1.5px;background:#424242;"></div>
<div style="left:1077px;top:549.5px;width:302px;height:30.5px;background:#6b6b6b;"></div>
<div style="left:1043px;top:579.5px;width:336px;height:1.5px;background:#474747;"></div>
<div style="left:1043px;top:611.0px;width:336px;height:1.5px;background:#474747;"></div>
<div style="left:1043px;top:642.5px;width:336px;height:1.5px;background:#474747;"></div>
<div style="left:1076px;top:548px;width:1px;height:95px;background:#474747;"></div>
<svg style="position:absolute;left:1052.5px;top:560.4px;" width="15" height="10" viewBox="0 0 15 10"><path d="M0.3 5 Q7.5 -3.2 14.7 5 Q7.5 13.2 0.3 5 Z" fill="#f0f0f0"/><circle cx="7.5" cy="5" r="3" fill="#383838"/><circle cx="8.4" cy="4" r="0.8" fill="#9a9a9a"/></svg>
<svg style="position:absolute;left:1052.5px;top:591.8px;" width="15" height="10" viewBox="0 0 15 10"><path d="M0.3 5 Q7.5 -3.2 14.7 5 Q7.5 13.2 0.3 5 Z" fill="#f0f0f0"/><circle cx="7.5" cy="5" r="3" fill="#383838"/><circle cx="8.4" cy="4" r="0.8" fill="#9a9a9a"/></svg>
<svg style="position:absolute;left:1052.5px;top:623.4px;" width="15" height="10" viewBox="0 0 15 10"><path d="M0.3 5 Q7.5 -3.2 14.7 5 Q7.5 13.2 0.3 5 Z" fill="#f0f0f0"/><circle cx="7.5" cy="5" r="3" fill="#383838"/><circle cx="8.4" cy="4" r="0.8" fill="#9a9a9a"/></svg>
<svg style="position:absolute;left:1078px;top:551px;" width="42" height="28" viewBox="0 0 42 28"><path d="M1 8.5 V1 H14.5 M27.5 1 H41 V8.5 M41 19.5 V27 H28.5 M14.5 27 H1 V19.5" stroke="#eeeeee" stroke-width="1.6" fill="none"/><path d="M15.3 8.5 H26.6 V12 H25 V10.3 H21.9 V18.6 H24 V20.2 H17.9 V18.6 H20 V10.3 H16.9 V12 H15.3 Z" fill="#ececec"/></svg>
<div class="t" style="left:1127.8px;top:559.74px;font-size:12px;color:#f0f0f0;font-weight:400;letter-spacing:0px;transform:scaleX(0.8946);transform-origin:0 0;">Layer 2</div>
<svg style="position:absolute;left:1081.5px;top:586.5px;" width="35" height="21" viewBox="0 0 35 21"><rect x="0" y="0" width="35" height="21" fill="#888"/><rect x="0.00" y="0" width="1.5" height="21" fill="#555"/><rect x="1.50" y="0" width="1.5" height="21" fill="#e6e6e6"/><rect x="3.00" y="0" width="1.5" height="21" fill="#e6e6e6"/><rect x="4.50" y="0" width="1.5" height="21" fill="#555"/><rect x="6.00" y="0" width="1.5" height="21" fill="#888"/><rect x="7.50" y="0" width="1.5" height="21" fill="#e6e6e6"/><rect x="9.00" y="0" width="1.5" height="21" fill="#bbb"/><rect x="10.50" y="0" width="1.5" height="21" fill="#333"/><rect x="12.00" y="0" width="1.5" height="21" fill="#e6e6e6"/><rect x="13.50" y="0" width="1.5" height="21" fill="#1a1a1a"/><rect x="15.00" y="0" width="1.5" height="21" fill="#e6e6e6"/><rect x="16.50" y="0" width="1.5" height="21" fill="#1a1a1a"/><rect x="18.00" y="0" width="1.5" height="21" fill="#999"/><rect x="19.50" y="0" width="1.5" height="21" fill="#bbb"/><rect x="21.00" y="0" width="1.5" height="21" fill="#888"/><rect x="22.50" y="0" width="1.5" height="21" fill="#e6e6e6"/><rect x="24.00" y="0" width="1.5" height="21" fill="#555"/><rect x="25.50" y="0" width="1.5" height="21" fill="#555"/><rect x="27.00" y="0" width="1.5" height="21" fill="#333"/><rect x="28.50" y="0" width="1.5" height="21" fill="#bbb"/><rect x="30.00" y="0" width="1.5" height="21" fill="#e6e6e6"/><rect x="31.50" y="0" width="1.5" height="21" fill="#999"/><rect x="33.00" y="0" width="1.5" height="21" fill="#e6e6e6"/><rect x="0.5" y="0.5" width="34" height="20" stroke="#2a2a2a" stroke-width="1.2" fill="none"/></svg>
<div class="t" style="left:1127.8px;top:590.74px;font-size:12px;color:#f0f0f0;font-weight:400;letter-spacing:0px;transform:scaleX(0.8946);transform-origin:0 0;">Layer 1</div>
<div style="left:1081px;top:618px;width:36px;height:21px;background:#ffffff;border:1px solid #3a3a3a;"></div>
<div class="t" style="left:1128.8px;top:622.64px;font-size:12px;color:#f0f0f0;font-weight:400;letter-spacing:0px;transform:scaleX(0.9244);transform-origin:0 0;font-style:italic;">Background</div>
<svg style="position:absolute;left:1349px;top:622px;" width="12" height="13" viewBox="0 0 12 13"><path d="M3 6 V4 Q3 1 6 1 Q9 1 9 4 V6" stroke="#e0e0e0" stroke-width="1.4" fill="none"/><rect x="0.8" y="6" width="10.4" height="6.3" stroke="#e0e0e0" stroke-width="1.4" fill="none"/><rect x="5" y="8.3" width="2" height="2" fill="#e0e0e0"/></svg>
<div style="left:1379px;top:548px;width:18px;height:115px;background:#4f4f4f;"></div>
</body></html>
